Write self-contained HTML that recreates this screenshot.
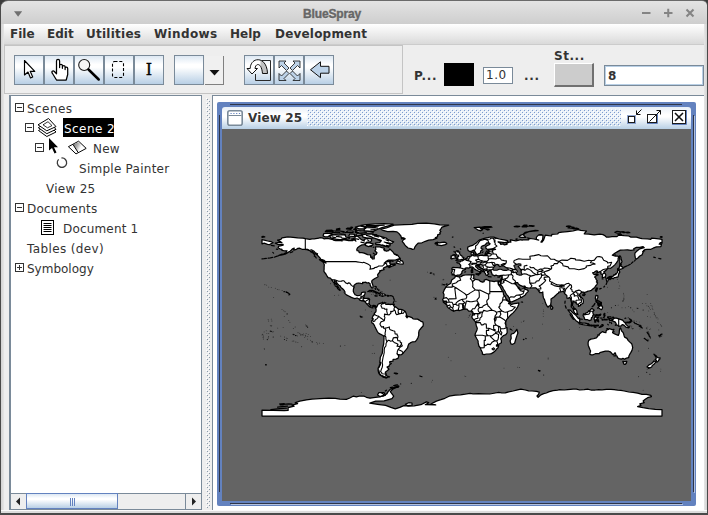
<!DOCTYPE html>
<html lang="en">
<head>
<meta charset="utf-8">
<title>BlueSpray</title>
<style>
html,body{margin:0;padding:0;}
body{width:708px;height:515px;overflow:hidden;background:#3c3c3c;position:relative;font-family:"DejaVu Sans","Liberation Sans",sans-serif;font-size:12px;color:#333;}
.abs{position:absolute;}
#win{position:absolute;left:0;top:0;width:708px;height:515px;background:#4a4a4a;border-radius:8px 6px 0 0;overflow:hidden;}
#edgeL{left:0;top:0;width:1px;height:515px;background:#4a4a4a;}
#edgeL2{left:1px;top:24px;width:3px;height:490px;background:linear-gradient(90deg,#d2d2d2,#e6e6e6);}
#edgeR{left:707px;top:0;width:1px;height:515px;background:#4a4a4a;}
#edgeR2{left:704px;top:24px;width:3px;height:490px;background:linear-gradient(90deg,#e6e6e6,#d2d2d2);}
#edgeB{left:0;top:513px;width:708px;height:2px;background:#4a4a4a;}
#edgeB2{left:1px;top:510px;width:706px;height:3px;background:#dcdcdc;border-top:1px solid #fafafa;box-sizing:border-box;}
#titlebar{left:1px;top:0;width:706px;height:24px;background:linear-gradient(#e3e3e3,#cecece);border-top:1px solid #6a6a6a;box-sizing:border-box;border-radius:7px 5px 0 0;}
#title{left:303px;top:7px;white-space:nowrap;font-family:"Liberation Sans","DejaVu Sans",sans-serif;font-weight:bold;font-size:12px;letter-spacing:-0.15px;color:#666666;-webkit-text-stroke:0.4px #666666;line-height:14px;text-shadow:0 1px 0 rgba(255,255,255,0.35);}
#menubar{left:4px;top:24px;width:700px;height:20px;background:linear-gradient(#ffffff,#dadada);border-bottom:1px solid #cccccc;}
.menu{position:absolute;top:26px;font-weight:bold;font-size:12px;line-height:16px;color:#333;white-space:nowrap;}
.tb{position:absolute;box-sizing:border-box;}
.btn{position:absolute;box-sizing:border-box;border:1px solid #7a8a99;background:linear-gradient(#dde8f3 0%,#ffffff 30%,#ffffff 40%,#b8cfe5 100%);}
.lbl{position:absolute;font-weight:bold;font-size:12px;line-height:16px;color:#333;white-space:nowrap;}
.tree{position:absolute;font-size:12px;line-height:16px;color:#333;white-space:nowrap;letter-spacing:0.45px;}
.pm{position:absolute;width:9px;height:9px;box-sizing:border-box;border:1px solid #333;background:#fff;}
.pm:before{content:"";position:absolute;left:1px;top:3px;width:5px;height:1px;background:#333;}
.pm.plus:after{content:"";position:absolute;left:3px;top:1px;width:1px;height:5px;background:#333;}
</style>
</head>
<body>
<div id="win">
  <div class="abs" style="left:1px;top:20px;width:706px;height:493px;background:#eeeeee"></div>
  <div class="abs" id="titlebar"></div>
  <div class="abs" id="title">BlueSpray</div>
  <!-- window buttons -->
  <svg class="abs" style="left:0;top:0" width="708" height="24" viewBox="0 0 708 24">
    <path d="M14 11.300 L22.200 11.300 L18.100 16.800 Z" fill="#6f6f6f"/>
    <rect x="642" y="12" width="8.500" height="2" fill="#848484"/>
    <path d="M664 13 h8.500 M668.250 8.750 v8.500" stroke="#848484" stroke-width="2" fill="none"/>
    <path d="M686.500 9.500 l7 7 M693.500 9.500 l-7 7" stroke="#848484" stroke-width="2.100" fill="none"/>
  </svg>
  <div class="abs" id="menubar"></div>
  <div class="menu" style="left:10px">File</div>
  <div class="menu" style="left:47px">Edit</div>
  <div class="menu" style="left:86px;letter-spacing:0.25px">Utilities</div>
  <div class="menu" style="left:154px;letter-spacing:0.35px">Windows</div>
  <div class="menu" style="left:230px">Help</div>
  <div class="menu" style="left:275px;letter-spacing:0.2px">Development</div>

  <!-- left toolbar -->
  <div class="tb" style="left:4px;top:45px;width:399px;height:49px;border:1px solid #c4c4c4;background:#eeeeee"></div>
  <div class="btn" style="left:14px;top:55px;width:30px;height:30px"></div>
  <div class="btn" style="left:44px;top:55px;width:30px;height:30px"></div>
  <div class="btn" style="left:74px;top:55px;width:30px;height:30px"></div>
  <div class="btn" style="left:104px;top:55px;width:30px;height:30px"></div>
  <div class="btn" style="left:134px;top:55px;width:30px;height:30px"></div>
  <div class="btn" style="left:174px;top:55px;width:30px;height:30px"></div>
  <div class="abs" style="left:205px;top:56px;width:18px;height:28px;background:#f0f0f0;border-right:1px solid #808080;border-bottom:1px solid #808080"></div>
  <div class="btn" style="left:244px;top:55px;width:30px;height:30px"></div>
  <div class="btn" style="left:274px;top:55px;width:30px;height:30px"></div>
  <div class="btn" style="left:304px;top:55px;width:30px;height:30px"></div>
  <svg class="abs" style="left:0;top:45px" width="402" height="50" viewBox="0 45 402 50">
    <!-- arrow cursor -->
    <path d="M24.500 60.500 L24.500 75 L28 72 L30.500 78 L32.700 77 L30.200 71.300 L34.800 71.300 Z" fill="#fff" stroke="#000" stroke-width="1.15" stroke-linejoin="round"/>
    <!-- hand -->
    <path d="M56.500 80 L52.500 73.500 C50.800 71.300 53 70 54.600 71.700 L56.500 73.800 L56.500 61 C56.500 58.800 59.600 58.800 59.600 61 L59.600 67.500 L59.600 65.500 C59.600 64 62.400 64 62.400 65.500 L62.400 68.300 L62.400 66.700 C62.400 65.200 65.100 65.200 65.100 66.700 L65.100 69.500 L65.100 68.200 C65.100 66.800 67.700 66.800 67.700 68.400 L67.700 74.500 L66.200 80 Z" fill="#fff" stroke="#000" stroke-width="1.25" stroke-linejoin="round"/>
    <!-- magnifier -->
    <circle cx="84.2" cy="65" r="5.5" fill="#f6f6f6" stroke="#1a1a1a" stroke-width="1.1"/>
    <path d="M88.500 69.500 L98.700 79.500" stroke="#000" stroke-width="2.500" stroke-linecap="round"/>
    <!-- dashed rect -->
    <rect x="112.500" y="61.500" width="11" height="16" rx="2" fill="none" stroke="#000" stroke-width="1.1" stroke-dasharray="3 1.800"/>
    <!-- dropdown arrow -->
    <path d="M209.500 70 L219.500 70 L214.500 75.500 Z" fill="#111"/>
    <!-- rotate icon -->
    <defs><linearGradient id="rg" x1="247" y1="0" x2="268" y2="0" gradientUnits="userSpaceOnUse"><stop offset="0.6" stop-color="#ffffff"/><stop offset="0.68" stop-color="#c2c2c2"/></linearGradient></defs>
    <path d="M255.500 74 V80.500 H270.500 V60.500 H262" fill="none" stroke="#2a2a2a" stroke-width="1"/>
    <path d="M247 68.500 L252 74 L257.500 68.500 L255 68.500 C255.500 63 261.500 62 262.500 73.500 L267.500 73.500 C267 55.500 250.500 56.500 250.200 68.500 Z" fill="url(#rg)" stroke="#111" stroke-width="1" stroke-linejoin="round"/>
    <!-- 4 arrows -->
    <g fill="#bcd2e8" stroke="#111" stroke-width="0.8" stroke-linejoin="round">
      <path d="M279 61 L286 61 L284 63 L289 68 L286.500 70.500 L281.500 65.500 L279 68 Z"/>
      <path d="M300 61 L293 61 L295 63 L290 68 L292.500 70.500 L297.500 65.500 L300 68 Z"/>
      <path d="M279 80.500 L286 80.500 L284 78.500 L289 73.500 L286.500 71 L281.500 76 L279 73.500 Z"/>
      <path d="M300 80.500 L293 80.500 L295 78.500 L290 73.500 L292.500 71 L297.500 76 L300 73.500 Z"/>
    </g>
    <!-- left arrow -->
    <path d="M310.500 69.750 L320.500 61.800 L320.500 66.300 L329 66.300 L329 73.200 L320.500 73.200 L320.500 77.700 Z" fill="#bcd2e8" stroke="#111" stroke-width="1" stroke-linejoin="round"/>
  </svg>
  <div class="abs" style="left:143px;top:60px;width:12px;text-align:center;font-family:'DejaVu Serif','Liberation Serif',serif;font-weight:normal;font-size:16px;line-height:20px;color:#000;-webkit-text-stroke:0.35px #000">I</div>

  <!-- right toolbar -->
  <div class="lbl" style="left:414px;top:68px;letter-spacing:0.8px">P...</div>
  <div class="abs" style="left:444px;top:63px;width:30px;height:23px;background:#000"></div>
  <div class="abs" style="left:483px;top:67px;width:30px;height:17px;box-sizing:border-box;border:1px solid #7a8a99;background:#fff;font-size:12px;line-height:15px;color:#333;padding-left:2px;letter-spacing:0.5px">1.0</div>
  <div class="lbl" style="left:524px;top:68px;letter-spacing:0.7px">...</div>
  <div class="lbl" style="left:554px;top:48px;letter-spacing:0.55px">St...</div>
  <div class="abs" style="left:554px;top:63px;width:40px;height:24px;box-sizing:border-box;background:#cccccc;border-top:1px solid #ffffff;border-left:1px solid #ffffff;border-right:2px solid #707070;border-bottom:2px solid #707070"></div>
  <div class="abs" style="left:604px;top:65px;width:100px;height:21px;box-sizing:border-box;border:1px solid #7a8a99;box-shadow:inset 0 0 0 1px #b8cfe5;background:#fff;font-size:12px;font-weight:bold;line-height:20px;color:#333;padding-left:3px">8</div>

  <!-- tree panel -->
  <div class="abs" style="left:9px;top:95px;width:193px;height:415px;box-sizing:border-box;border:1px solid #7a8a99;border-left-width:2px;background:#fff"></div>
  <div class="pm" style="left:15px;top:103px"></div>
  <div class="tree" style="left:27px;top:101px">Scenes</div>
  <div class="pm" style="left:25px;top:123px"></div>
  <div class="abs" style="left:63px;top:118px;width:51px;height:19px;background:#000"></div>
  <div class="tree" style="left:64px;top:121px;color:#fff">Scene 2</div>
  <div class="pm" style="left:35px;top:143px"></div>
  <div class="tree" style="left:93px;top:141px;letter-spacing:0.2px">New</div>
  <div class="tree" style="left:79px;top:161px;letter-spacing:0.26px">Simple Painter</div>
  <div class="tree" style="left:46px;top:181px;letter-spacing:0.28px">View 25</div>
  <div class="pm" style="left:15px;top:203px"></div>
  <div class="tree" style="left:27px;top:201px;letter-spacing:0.23px">Documents</div>
  <div class="tree" style="left:63px;top:221px;letter-spacing:0.18px">Document 1</div>
  <div class="tree" style="left:27px;top:241px;letter-spacing:0.38px">Tables (dev)</div>
  <div class="pm plus" style="left:15px;top:263px"></div>
  <div class="tree" style="left:27px;top:261px;letter-spacing:0.0px">Symbology</div>
  <svg class="abs" style="left:10px;top:96px" width="191" height="180" viewBox="10 96 191 180">
    <!-- layers icon -->
    <g fill="#fff" stroke="#000" stroke-width="1" stroke-linejoin="round">
      <path d="M38.500 130.500 L46.800 136.500 L56 132 L48.500 124.500 Z"/>
      <path d="M38.300 127.700 L46.800 133.700 L56 129.300 L48.500 121.500 Z"/>
      <path d="M38 124.800 L46.800 130.800 L56 126.600 L48.500 118.500 Z"/>
      <path d="M43 124.800 L47.500 127.800 L52 125.600 L48 121.700 Z" fill="#fff" stroke-width="0.8"/>
    </g>
    <!-- mouse pointer -->
    <path d="M49 138 L49 150.500 L52 148 L54.500 153.500 L56.500 152.500 L54 147.200 L58 147.200 Z" fill="#000"/>
    <!-- New icon -->
    <defs><linearGradient id="ng" x1="74" y1="146" x2="80" y2="149" gradientUnits="userSpaceOnUse"><stop offset="0" stop-color="#8a8a8a"/><stop offset="0.5" stop-color="#b8b8b8"/><stop offset="1" stop-color="#ffffff"/></linearGradient></defs>
    <path d="M68.400 146.700 L78.600 141.200 L86.200 148.400 L76 153.900 Z" fill="#fff" stroke="#000" stroke-width="1" stroke-linejoin="round"/>
    <path d="M73 144.300 L79 142.200 L83.500 148.800 L78 152 Z" fill="url(#ng)"/>
    <path d="M72.800 144.200 L78 152.300" stroke="#000" stroke-width="1"/>
    <!-- circle -->
    <path d="M61.500 158 A4.700 4.700 0 1 1 58.600 159.400" fill="none" stroke="#3a3a3a" stroke-width="1.300"/>
    <!-- document -->
    <rect x="41.500" y="220.500" width="12" height="14" fill="#fff" stroke="#000" stroke-width="1"/>
    <path d="M43.500 223.500 h8 M43.500 225.500 h8 M43.500 227.500 h8 M43.500 229.500 h8 M43.500 231.500 h8" stroke="#000" stroke-width="1"/>
  </svg>
  <!-- scrollbar -->
  <div class="abs" style="left:11px;top:493px;width:190px;height:16px;box-sizing:border-box;border-top:1px solid #7a8a99;background:#eeeeee"></div>
  <div class="abs" style="left:26px;top:493px;width:92px;height:16px;box-sizing:border-box;border:1px solid #6382bf;background:linear-gradient(#dde8f3 0%,#ffffff 30%,#ffffff 40%,#b8cfe5 100%)"></div>
  <div class="abs" style="left:185px;top:494px;width:1px;height:15px;background:#7a8a99"></div>
  <svg class="abs" style="left:11px;top:493px" width="190" height="16" viewBox="11 492 190 16">
    <path d="M16 500.500 L20 496.500 L20 504.500 Z" fill="#222"/>
    <path d="M196 500.500 L192 496.500 L192 504.500 Z" fill="#222"/>
    <path d="M70.500 497 v8 M72.500 497 v8 M74.500 497 v8" stroke="#6382bf" stroke-width="1"/>
  </svg>

  <!-- divider -->
  <svg class="abs" style="left:202px;top:95px" width="11" height="416" viewBox="0 0 11 416">
    <defs><pattern id="dv" x="4" y="3" width="4" height="4" patternUnits="userSpaceOnUse">
      <rect x="0" y="0" width="1" height="1" fill="#ffffff"/><rect x="1" y="1" width="1" height="1" fill="#8c9bab"/>
      <rect x="2" y="2" width="1" height="1" fill="#ffffff"/><rect x="3" y="3" width="1" height="1" fill="#8c9bab"/>
    </pattern></defs>
    <rect x="4" y="3" width="4" height="410" fill="url(#dv)"/>
  </svg>

  <!-- desktop pane -->
  <div class="abs" style="left:212px;top:95px;width:493px;height:416px;box-sizing:border-box;border-top:1px solid #7a8a99;border-left:1px solid #7a8a99;background:#fff"></div>
  <!-- internal frame -->
  <div class="abs" style="left:217px;top:102px;width:479px;height:404px;background:#6382bf;border-radius:2px"></div>
  <div class="abs" style="left:222px;top:107px;width:469px;height:22px;background:linear-gradient(#e8eff7 0%,#ffffff 35%,#ffffff 45%,#b8cfe5 100%);border-radius:3px 3px 0 0"></div>
  <svg class="abs" style="left:217px;top:102px" width="479" height="404" viewBox="217 102 479 404">
    <defs><pattern id="bump" x="307" y="109" width="4" height="4" patternUnits="userSpaceOnUse">
      <rect x="0" y="0" width="1" height="1" fill="#ffffff"/><rect x="1" y="1" width="1" height="1" fill="#7d9bcf"/>
      <rect x="2" y="2" width="1" height="1" fill="#ffffff"/><rect x="3" y="3" width="1" height="1" fill="#7d9bcf"/>
    </pattern></defs>
    <rect x="307" y="109" width="314" height="17" fill="#dfe9f4" opacity="0.55"/><rect x="307" y="109" width="314" height="17" fill="url(#bump)"/>
    <!-- inner dark lines of border -->
    <path d="M230 104.500 H682" stroke="#2e3548" stroke-width="1"/>
    <path d="M219.500 115 V492" stroke="#2e3548" stroke-width="1"/>
    <path d="M693.500 115 V492" stroke="#2e3548" stroke-width="1"/>
    <path d="M230 503.500 H682" stroke="#2e3548" stroke-width="1"/>
    <path d="M694.500 116 V493" stroke="#ffffff" stroke-width="1" opacity="0.5"/>
    <path d="M231 504.500 H683" stroke="#ffffff" stroke-width="1" opacity="0.5"/>
    <!-- frame icon -->
    <rect x="227.800" y="110.800" width="14.400" height="14.400" rx="2" fill="#fff" stroke="#7a8a99" stroke-width="1.600"/>
    <path d="M228.500 115.500 H241.500" stroke="#7a8a99" stroke-width="1"/>
    <path d="M230.500 113.500 h1.200 M233.300 113.500 h1.200 M236.100 113.500 h1.200 M238.900 113.500 h1.200" stroke="#6382bf" stroke-width="1.200"/>
    <!-- iconify -->
    <rect x="628.500" y="116.500" width="6" height="6" fill="#fff" stroke="#1a1a1a" stroke-width="1"/>
    <rect x="627.500" y="115.500" width="8" height="8" fill="none" stroke="#6382bf" stroke-width="1" opacity="0.7"/>
    <path d="M641.500 109.500 L636.500 114.500 M636.500 110.500 V114.500 H640.500" stroke="#111" stroke-width="1" fill="none"/>
    <!-- maximize -->
    <rect x="647.500" y="114.500" width="9" height="8" fill="#fff" stroke="#1a1a1a" stroke-width="1"/>
    <path d="M647 123.500 H657.500 V114" stroke="#6382bf" stroke-width="1" fill="none"/>
    <path d="M649.500 121.500 L660.500 110.500 M656.500 110.500 H660.500 V114.500" stroke="#111" stroke-width="1" fill="none"/>
    <!-- close -->
    <rect x="672.500" y="110.500" width="13" height="13" fill="#fff" stroke="#1a1a1a" stroke-width="1"/>
    <path d="M672 124.500 H686.500 V110" stroke="#6382bf" stroke-width="1" fill="none"/>
    <path d="M675 113 L683 121 M683 113 L675 121" stroke="#111" stroke-width="1.6" fill="none"/>
  </svg>
  <div class="abs" style="left:248px;top:110px;font-weight:bold;font-size:12px;line-height:16px;color:#333;white-space:nowrap;letter-spacing:0.15px">View 25</div>
  <!-- map content -->
  <div class="abs" style="left:222px;top:129px;width:469px;height:372px;background:#646464;overflow:hidden">
<svg class="abs" style="left:0;top:-1px" width="469" height="373" viewBox="0 0 469 373">
<g fill="#ffffff" stroke="none">
<path d="M53.3 115.1 57.8 114.1 60 114.7 58.3 113.6 55.6 112.1 58.9 111.3 60 109.9 66.1 108.8 71.1 109.3 75.6 109.9 81.1 110.2 83.3 110.7 87.8 111.3 90 110.8 92.2 110.8 96.7 110.2 97.8 109.7 101.1 110.2 102.2 110.9 105.6 110.4 110 111.3 112.2 112.4 113.9 112.7 117.8 112.4 120 113 120 111.8 122.8 111.9 126.7 112.7 130.6 112.7 131.1 111.9 133.3 112.2 133.9 113.2 132.8 111.3 133.3 110.2 132.8 108.6 135 108 136.7 109.1 137.8 110.2 138.3 110.8 140 111.9 142.2 113 142.2 111.3 145.6 110.4 148.9 110.6 149.7 111.9 148.9 113.6 147.8 114.4 145 114.1 143.3 115.4 142.2 116.7 140 116.9 137.8 118 135.6 119.7 134.8 121.3 135 122.7 136.7 122.8 137.2 124.7 140 124.7 142.2 125.2 145.6 126.6 148.6 126.8 148.7 129.1 150 130.2 150.6 131 152.2 130.8 152.2 129.1 152.2 127.4 154.4 126.1 155 124.7 152.8 122.8 153.9 121.3 153.3 118.8 157.8 118.8 160 119.7 162.2 120.2 162.8 122.4 164.4 123.2 166.7 122.7 167.8 121 171.1 124.1 172.2 125.8 175.6 127.1 176.7 128.6 178 130.2 176.7 130.9 173.3 132.2 168.9 132.1 166.1 132.2 163.9 133.6 162.2 135.2 164.4 133.9 167.8 133.3 168.6 133.8 167.8 134.7 168 135.8 168.9 136.7 172.2 135.8 173.3 136.9 169.4 138.4 167 139.7 166.4 138.8 168.3 137.6 165.6 138 165.6 138.3 163.3 139.1 161.7 139.9 161.3 140.8 162.2 141.6 160.6 142 157.8 142.8 157.8 144.1 156.7 145.2 155.6 146.9 156.1 148.8 154.4 149.7 153.3 150.3 151.7 151.3 150 152.4 149.7 154.1 150.6 156.3 151.1 158.2 150.8 159.9 149.8 160 149.1 158.9 148.1 157.1 148.1 155.8 146.7 154.7 145 155 143.9 154.2 142.2 154.3 140.6 154.4 140.8 155.6 138.9 155.4 136.7 155 134.8 155.3 133.3 156.3 131.9 157.4 132 159.1 131.4 161.3 131.3 163.2 132 165 133 166.6 134.4 167.3 135.6 167.7 137.8 167.3 139.1 166.6 139.6 164.7 141.7 164.1 143.3 164.1 142.8 166.3 142.2 167.4 141.9 169.1 141.3 170.2 142.2 170.4 144.4 170.3 146.7 170.4 147.6 171.3 147.2 173.6 147 175.8 147.8 176.9 148.9 178 150 178.2 151.3 177.4 153.3 177.7 154.1 178.6 153.4 180 152.9 178.8 151.7 178.1 150.8 178.9 150.9 179.9 149.4 179.6 147.8 178.8 147 178.2 145.6 176.9 144.7 175.9 143.3 174.1 142.6 173.3 140.6 173 138.3 172.4 136.7 170.8 135 170 132.8 170.6 130.6 169.9 128.9 169.1 126.7 168 124.4 166.9 122.8 165.4 123 164.1 122.2 162.4 120.6 160.8 118.9 159.4 118.3 158 116.7 156.9 115 155.2 114.2 153.3 112.4 152.7 112.6 154.1 113.9 155.8 115 157.4 116.7 159.7 117.4 161 118.3 162.2 117.6 162.4 115.6 160.6 115.2 159.1 113.3 158 113 156.9 112.2 155.2 111.1 153.8 109.9 151.9 108.4 150.2 106.1 149.7 104.6 147.3 103.9 146 102.4 144.1 101.9 143.1 102.1 141.3 102.1 139.1 102.3 136.7 101.4 134.2 103.3 134.1 103.9 135.2 103.6 133.6 102.2 132.4 98.9 131.3 97.8 129.7 95.6 127.4 94.4 126.3 92.2 124.7 90 123 87.8 122.8 85 121.6 82.2 121.3 80 121.3 77.8 120.2 75.6 120.4 74.4 121.3 71.7 122.1 72.2 120.2 70.6 120.8 69.4 122 68.3 123 66.1 124.4 63.9 125.8 61.1 126.7 58.9 127.1 56.9 127.3 60 126.1 61.7 125.8 63.9 124.7 65 122.8 63.3 122.8 61.7 122.7 60 122.4 60 121.3 57.8 120.8 56.1 119.7 56.7 118.2 58.3 117.8 61.1 117.2 61.1 116.3 58.9 116.3 55.6 116.3ZM158.9 101.1 164.4 100 167.8 98.6 172.2 97.1 182.2 96.6 190 96.3 195.6 95.4 204.4 95.1 212.2 95.8 217.8 96.9 226.7 97.2 220 99.1 218.9 100.8 217.8 102.4 218.9 103.6 217.8 104.7 218.3 105.8 215.6 106.9 215.6 108.6 213.3 109.7 215 110.1 211.1 111.6 206.7 112.2 203.3 113.3 200 114.8 196.1 115.2 194.4 116.9 192.8 119.1 192.2 121 190.6 121.4 188.9 120.6 186.1 120 184.4 118.6 182.8 116.9 181.7 115.2 180.3 113.6 181.1 111.9 183.3 110.8 179.4 109.7 178.9 108 177.2 105.8 175 103.9 171.1 103.3 165.6 103.6 161.1 102.4ZM166.7 119.1 161.1 118 157.8 116.6 153.9 116.6 153.3 115.2 157.8 114.7 158.9 112.4 154.4 110.8 152.2 110.2 145.6 110.2 141.1 109.1 140 106.9 145.6 106 150 106.1 154.4 107.1 157.8 108.2 161.1 109.1 164.4 110.2 165.6 111.3 168.9 112.8 171.7 113.8 170 115.4 167.8 115 164.4 114.7 168.3 116.3 167.8 118 164.4 117.4ZM109.4 110.2 113.3 111.1 117.8 111.7 123.3 111.3 127.2 110.6 127.8 109.7 123.9 109.1 123.3 107.1 120 106.6 116.7 107.2 113.3 106.7 108.9 107.2 107.8 108.6ZM101.1 108 103.3 108.9 106.1 108.6 107.8 107.4 111.1 106.6 109.4 105.6 105.6 105.2 101.7 105.6ZM142.2 103 151.1 103.3 153.3 102.4 156.7 100.8 160 99.7 164.4 98.3 171.1 96.7 171.1 96 162.2 95.7 153.3 95.8 144.4 96.7 138.9 97.4 142.2 98.8 144.4 99.7 142.2 101.3ZM133.3 99.1 136.7 100.8 142.2 100.8 143.3 99.1 137.8 97.8ZM137.8 105 145.6 105.2 151.1 104.9 151.1 103.9 145.6 103.2 140 102.8 133.3 102.7 133.3 103.9ZM133.9 108 140 107.1 140 105.8 134.4 105.8ZM126.7 108 132.2 108.6 132.8 106.3 127.8 106ZM110 104.4 117.8 105.2 122.2 104.7 122.2 103.6 117.8 103.2 111.1 103ZM124.4 104.4 131.1 104.7 131.1 103 125.6 103ZM103.3 103.6 111.1 103.2 110 102.1 104.4 102.4ZM143.3 117.4 146.7 118.6 150.6 117.2 151.1 115.8 146.7 114.7 143.9 115.2ZM174.1 135.1 177.8 136 181.1 136.1 181.4 135 180.6 133.2 178.3 132.4 178.3 130.7 176.3 131.7 175 133.6ZM97.4 131.7 100.6 132.2 102.8 134.1 101.3 134.1 99.4 133ZM40 115.8 42.2 115.2 45.6 116.3 47.8 116.6 48.9 115.8 51.1 114.7 48.9 113.6 45.6 113 42.2 112.1 40 111.6ZM154.1 178.6 154.7 179.1 156.1 176.3 156.9 175.8 158.9 175.2 160.6 174.2 160.6 175.8 162.2 175.2 162.2 174.4 163.9 176.3 166.7 176.2 168.3 176.7 171.1 176.1 171.3 176.9 172.4 178.6 173.9 179.1 175.6 180.4 176.7 181.3 178.9 181.3 180.6 181.8 182.2 182.7 183.3 183.6 184.4 186 184.4 187.7 186.1 188.6 187.2 188.7 190 189.7 191.1 190.8 193.3 191.1 195.6 191.1 197.2 192.1 198.9 193.3 200.8 193.8 201.3 196 201.1 198 199.4 199.7 198.3 201.3 197.2 202.4 196.7 204.7 196.7 207.4 195.9 209.7 194.7 211.9 193.3 213.6 190.6 213.8 188.3 214.9 186.7 216.1 186 218 185.6 219.9 183.9 221.9 182.2 223.8 180.7 225.6 179.4 226.7 177.8 226.8 175.8 226.3 175.1 225.8 176.4 227.4 176.7 228.6 175.9 230.4 173.9 231.1 171.1 231.3 170.9 233.2 167.8 233.6 167.8 235.2 169.3 235.4 167.4 236.9 167.2 238.1 165 239.1 166.1 240.2 166.9 241.2 164.9 243 163.3 244.3 164 246.1 164.1 246.7 165 248 167.6 248.8 166.1 249.2 163.9 249.7 162.2 249.4 160 248.3 157.8 246.7 156.7 245.2 156.1 242.4 156.1 240.2 157.2 238.6 158.3 236.9 158.9 234.7 157.8 233.6 158.1 231.9 158.3 229.3 159.2 227.4 160.3 225.2 160.6 222.4 160.7 220.2 161.2 218 161.7 215.8 161.8 213.6 162 210.8 161.9 208.3 160.6 207.2 158.3 206.1 156.4 205 155.2 203.3 154.2 201.3 153.1 199.1 152.2 197.1 151.2 195.6 149.8 194.7 149.7 192.8 150.8 191.8 151.3 190.8 150.1 190.4 150.6 188.9 151.1 187.7 152.2 186.7 152.4 185.2 153.9 183.8 154.1 181.9 153.9 180.2 153.4 180ZM233.4 148.2 234.1 148.1 236.7 148.8 238.9 148.6 241.1 147.4 243.3 147 246.7 146.9 249.6 146.9 251.1 146.6 252.2 146.9 251.7 148 251.9 149.7 251.1 150.2 252.2 151 253.9 151.4 256.9 152 258.3 153.3 260.6 154.2 262.2 153.6 262.2 152.1 264.4 151.4 266.1 152.2 267.8 152.9 270 153.2 272.2 153.7 273.9 153 275.6 153.2 278 153.2 276.2 154.7 276.3 156.3 277.6 158 278.9 160.2 279.6 161.9 281 163.6 281.4 165.2 281.6 167.1 282.9 168 283.7 170.2 284.4 171.3 286.1 172.8 287.8 173.9 288.1 175 287.8 175.2 289.4 176.4 292.2 175.7 294.4 175.3 296.9 174.8 296.7 176.4 295.6 179.1 293.3 182.4 291.1 184.9 288.9 186.8 286.7 189.1 285.6 190.4 284.4 191.9 283.7 193.6 283.1 195.2 283.9 196.9 283.9 199.1 285 199.9 285.1 202.4 285.2 204.7 283.9 206.6 281.1 207.8 279.4 209.7 278.7 210.8 279.3 212.4 279.4 214.7 276.7 216.3 276.6 217.8 276.1 219.7 274.4 221.3 273.3 222.8 271.4 224.4 269.4 225.6 267.8 225.8 264.4 226 262.2 226.7 260.4 226.1 260.3 224.3 259.2 222.4 258.3 219.8 256.9 218 256.1 214.7 256.1 213 254.8 210.8 253.3 208 253.1 206.3 253.7 204.7 255 201.9 255.3 200.2 254.4 198 253.7 194.8 253.3 193.6 252.2 192.4 250.3 190.2 249.8 188.8 250.6 187.4 250.8 185.8 250.9 184.1 249.8 183 247.8 183.1 246.7 183.2 245.6 181.9 244.8 181 242.8 181 241.1 181.3 238.9 182.2 237.2 182.6 235.6 182.2 233.3 182.7 231.7 183.1 230 182.4 227.8 180.7 226.1 179.7 225.2 178.6 225 177.1 223.3 175.8 221.4 174.2 221.3 173 220.6 171.7 221.7 170.2 221.9 168 222 166.3 221.1 164.7 222.2 161.9 223.9 159.1 225.6 157.1 227.2 156.3 228.9 155.2 229.2 153.6 229.7 151.9 231.7 150.6 232.8 149.7ZM233.9 148 235 147.2 237.8 147.1 239.4 145.8 240 144.9 239.7 144.1 240.9 142.4 243.6 141.3 243.3 140 245 139.8 246.7 140.1 248.3 139.3 250 138.8 251.4 139.7 252.2 140.9 253.9 141.9 255.6 142.7 257.4 143.6 257.8 144.9 257.4 145.8 258.3 145.6 259.1 144.7 258.3 143.9 258.9 143 260.6 143.6 260.3 142.9 257.8 141.6 256.7 141.3 255.6 140.7 255 139.6 253.7 138.8 253.7 137.7 255.2 137.2 255.6 138 256.7 138.6 257.2 139.3 258.9 140.2 260.6 140.9 261.7 141.7 261.6 143.2 262.2 144.1 263.3 145.3 263.9 146.9 264.8 147.4 265.6 147.4 265.8 146.3 266.7 146.1 266.1 145.2 265.3 144.1 265.3 143 266.4 143.6 267.2 142.7 268.9 142.7 269.2 143.3 269.1 144.1 269.8 145.2 270.3 146.9 271.3 147.2 272.8 147.8 274 147.1 275.6 147.8 277.8 147.7 279.8 147.3 280 148.6 279.8 149.7 279 151.3 278.3 153 278 153.2 276.1 153.4 276.2 154.7 277.2 156.7 278 157.1 278.8 155.2 278.9 156.9 280.6 159.1 281.4 161 282.8 163 283.6 164.7 284.4 166.3 286.1 168.2 287.2 170 287.8 172.4 288.3 173.9 290 173.8 293.3 172.4 295.6 171.3 298 170 300 169.1 301.4 168.3 303.3 167 304.2 165.4 305.6 164.1 306.4 163 305.1 161.8 303.3 161.3 302.7 160.3 302.7 158.8 302.2 159.4 300.6 161 297.8 161.3 297.3 160.2 297 159.1 296.4 160.2 295.7 158.9 294.4 157.4 293.3 155.2 293.9 154.7 295.6 154.7 296.4 156 298.3 157.4 300.6 158.4 302.8 158 303.7 159.4 305.6 159.8 308.3 160 311.1 159.9 313.9 159.8 314.8 160.8 316.1 161.9 317.8 163 316.7 163.2 317.8 164.7 320 164.7 320.8 163.9 320.9 166.9 321.4 169.7 322.6 171.9 323.3 174.3 324.4 176.9 325.6 178.8 326.2 179 326.9 178.1 328 177.7 328.7 176.6 329.1 173.6 329 171 330.6 169.9 331.7 169.3 333.3 167.7 335 166.1 336.7 165 336.7 164.1 338.3 163.8 340 163.6 341.7 163 342.2 164.7 342.8 165.8 344.8 167.4 345 170.2 346.1 170.4 347.8 169.4 348.6 170.8 349.1 173 349.7 175.2 349.4 176.9 349.2 178.9 350.6 180.2 351.4 181.3 351.7 183 352.6 184.9 354.9 186.4 355.8 186.4 355 184.9 354.9 183 353.7 181.1 352.2 180.3 351.3 178.6 350.3 177.7 350.9 175.2 351.1 173.1 352.2 173.2 352.2 174 353.9 174.7 354.4 175.8 356.1 176.3 356.7 178 356.4 178.4 358.6 177.4 358.6 176.3 359.4 176.3 361.1 175.2 361.4 173.6 361.1 171.3 360 169.9 358.9 169.1 357.8 167.4 357.4 166.7 358.6 165.2 360 164.1 361.7 164.1 362.2 165.3 362.8 164.3 364.4 163.9 366.1 163.2 367.2 163 369.4 162.3 371.1 160.8 372.8 159.4 373.6 158 375 156.3 375.6 154.7 374.4 153.9 375.4 153 374.2 151.6 373.7 150 372.6 149.1 373.9 147.8 376.1 146.9 375.9 146.3 374.2 146.1 372.2 146.6 371.1 145.6 370.8 144.7 372.2 144.3 374.4 142.8 375.6 143 374.8 144.7 375.6 144.6 378.1 143.7 379.2 144.9 378.7 145.8 380.6 146.6 380.4 148 380.3 149.7 381.7 149.4 383.3 148.9 383.8 147.4 383.7 146.3 382.6 145 381.7 143.9 384.1 142.4 385 141 386.7 140 388.3 140.4 390.6 138.8 392.8 136.9 394.4 134.9 396.1 132.4 396.1 130.2 397 128.9 395.6 128 392.8 128 390.3 127.2 392.8 125.2 395.6 123.6 398.3 122.1 401.7 122 405.6 121.8 408.9 122.4 412.2 121.9 411.7 120.8 414.4 119.4 417.8 119.3 421.1 118.6 422.2 119.7 417.8 120.8 414.4 123.6 413 125 412.8 126.9 413.3 129.7 414.1 131.3 415.9 130 417.8 128 420 126.9 420.6 125.4 421.4 123.8 420.6 123.6 422.8 121.6 425 121.3 428.9 121.3 431.1 120.2 434.4 118.9 438.9 118.6 439.4 116.3 437.2 116.1 438.3 114.7 440 115.2 440 111.4 436.7 110.8 432.2 110.4 429.4 110.2 428.9 111.3 425.6 110.8 420 110.7 417.8 110.2 414.4 109.1 408.9 109.1 406.7 108 402.2 107.7 396.7 107.1 395 108.6 390 108.6 386.7 109.1 384.4 109.1 383.3 108 381.1 106.6 377.8 106.1 372.2 106.9 366.7 106.1 362.2 105.8 364.4 103 358.9 102.4 355.9 101.7 351.1 103 345.6 103.6 340 104.1 336.7 104.7 335.6 106 330 106.3 329.4 108 326.7 107.7 323.3 107.1 322.8 108.6 321.7 111.9 320 114.1 318.9 114.1 320.6 111.6 320.9 108.8 320.9 107.1 316.7 106.9 314.4 109.1 314.4 111.3 316.7 112.1 313.9 111.3 311.7 111 307.2 110.4 306.7 111.9 301.1 111.9 300 112.2 298.9 111.6 293.9 112.8 291.1 112.4 288.9 111.9 288.3 111.8 288.9 114.1 286.7 114.2 284.4 115.8 285 116.3 282.2 116.9 281.1 115.8 278.7 116.4 278.3 115.2 276.1 113.9 278.9 114.1 282.8 114.7 285.6 113.8 285.6 112.7 282.2 111.9 277.2 111 274.4 110.2 271.7 109.1 268.6 109 265.6 109.7 262.2 110.4 259.4 111.3 257.2 112.2 255.6 113.6 253.9 115.2 252.2 116.3 250.6 117.4 247.8 118.2 245.8 119.1 245.6 120.8 246.1 122.4 247.8 123.6 249.4 123.2 251.7 122.1 252.4 122.7 253.1 123.9 254.1 125.6 254.4 126.4 255.9 126.3 256.7 125.7 258.3 125.2 258.6 123.8 258.9 122.8 260.6 121.9 260.9 121.1 259.2 120.6 259.1 119.1 260 118.2 262.8 117.1 263.9 116 264.8 114.9 266.9 114.9 268.1 115.8 267.2 116.7 265 117.8 263.7 118.6 263.9 120.2 265 121 265.6 121.4 267.8 121.1 270 120.8 271.7 120.7 273.6 121.4 271.1 121.8 268.9 121.9 266.7 122 266.1 123 267.2 123.2 267 124.3 265.6 124.7 265 123.9 263.9 124.2 263.3 125.8 263.3 126.9 262.2 127.3 261.1 127.6 260.6 127.1 258.3 127.4 255.9 128 253.9 127.6 252.2 128 251.1 127.4 250.9 126.3 251.7 125.2 251.7 124 249.1 124.7 249.1 126.3 249.7 128 247.8 128.4 245.6 128.9 245 129.9 243.9 130.9 242.8 131.3 241.8 131.9 240.2 132.9 238.6 133.1 238.2 133.9 236.7 133.8 234.8 134.2 235.2 134.9 237.2 135.4 237.8 136.3 238.7 137.1 238.6 138.6 238 139.8 235.6 139.7 233.3 139.6 231.1 139.4 229.8 140.2 230.2 141.9 230.2 143.6 229.4 144.9 230.2 145.6 230.1 146.9 231.7 146.7 232.8 147.1 233.3 147.8ZM233.9 132.4 236.1 132.1 238.9 131.7 241.4 131.1 241.8 129.4 240.3 129.1 239.8 127.8 238.3 126.9 237.8 125.8 237.2 124.7 237.8 124 235.6 123.9 236.4 122.9 234.4 122.9 233.6 124.1 233.9 125.8 234.7 126.9 236.4 127 236.7 128.2 236.4 128.8 235 128.9 235.3 129.9 234.2 130.4 236.1 130.9 235.2 131.3ZM233.3 130 233.1 128.6 233.8 127.4 232.8 126.7 230.9 126.8 230.6 127.7 228.9 128 229.4 129.1 228.7 130.2 229.4 130.8 231.1 130.4ZM213 115.2 215 114.2 217.2 114.9 220 114.4 222.2 114.1 223.9 114.7 224.9 115.8 223.3 116.6 219.4 117.6 216.7 117.1 214.8 117.1 215.6 116.3 213.3 115.9 215.6 115.4ZM252.2 99.6 255.6 101.8 258.9 102.8 260.6 101.8 258.3 100.7 263.3 100.7 261.1 99.6 257.8 99.1 255 99.3ZM297.2 108.6 298.9 109.3 303.9 109.4 301.7 107.4 302.2 105.8 306.7 103.6 316.1 102.7 313.3 102.4 308.9 103.2 303.3 104.3 301.1 106.3 298.3 107.4ZM346.1 100 351.1 100.3 352.2 99.3 348.3 98.8ZM292.2 98.6 295.6 98.9 297.8 98.3 294.4 98.1ZM392.8 104.3 394.4 105 398.3 104.8 398.9 103.8 395 103.4ZM260 99.1 264.4 99.8 270 99.2 268.9 98.7 262.2 98.6ZM263.9 101.1 265.6 102 267.2 101.6 266.1 101ZM300 98.8 304.4 99 305.6 98.3 301.1 98.2ZM306.7 98.2 311.1 98.4 312.2 97.9 307.8 97.7ZM301.1 97.7 304.4 97.8 305 97.2 302.2 97.1ZM351.1 100.7 353.9 101.2 356.7 100.9 354.4 100.1ZM344.4 98.3 346.7 98.8 348.9 98.3 346.7 97.8ZM399.4 103.9 401.7 104.7 403.3 104.3 401.1 103.7ZM403.9 104.3 405.6 104.9 407.8 104.7 406.1 104.2ZM395.6 106 397.2 106.6 399.4 106.6 398.3 105.9ZM438.3 109.1 440 109.3 440 108.6 438.9 108.6ZM40 109.3 42.8 108.9 41.1 108.4 40 108.6ZM397.8 127.7 398.9 129.1 399.2 131.3 400 133.6 398.9 135.8 399.4 136.9 397.8 136.9 397.8 134.7 397.8 131.3 397.4 128.8ZM395.6 141.9 397.2 140.8 398.9 141.3 401.7 139.9 400.6 139.1 397.8 137.4 397.2 139.7 395.6 140.8ZM397 142.1 397.8 144.1 396.7 145.8 396.4 147.4 396.1 148.9 395 149.1 393.9 149.4 392.2 149.6 391.1 150.8 390 150.2 390 149.6 387.8 149.9 385.6 150.2 385.6 149.7 387.2 148.7 389.4 148.4 391.1 148.3 392 146.6 392.8 147.1 394.2 146 395.6 144.1 395.6 142.7ZM385.6 150.3 386.4 151.3 385.9 153.2 384.7 153.3 384.4 151.9 384.1 151ZM387.2 150.2 389.4 150 389.2 150.7 387.8 151.6 387 151ZM374.4 160 375.6 160.2 374.8 162.4 374.2 163.6 373.4 162.4ZM360.8 166.6 362.2 165.7 363.3 166.2 362.2 167.6 360.8 167.4ZM373.9 167.4 375.8 167.6 375.9 169.7 375 170.8 375.3 172.2 377.8 173.6 377.2 173.9 376.1 172.7 374.4 172.8 373.7 171.7 373.3 170.2ZM375.6 180.2 377.2 178.4 379.4 177.2 380.6 179.1 380.2 180.8 379.4 181.7 377.8 180.8 376.7 179.7ZM378.1 174.1 379.4 174.3 379.4 176.3 378.3 176.7 378.7 175.4ZM375.6 174.9 376.9 175.4 377 177.4 376.1 177.4 375.9 176ZM370.2 178.6 371.7 177.4 372.9 175.4 372.4 176.6 371.1 178.2ZM373.8 173.1 374.9 173.2 374.8 174.3 374.2 174.1ZM361.1 187.7 361.4 186 362.8 186.1 363.9 185 365.6 184.4 366.7 183 368.3 181.9 369.7 180.3 370.8 181 372.2 182.2 371.1 183.2 370.8 184.1 371.1 185.6 372.2 186.9 370.9 187.1 370.6 188.9 369.4 189.7 369.2 191.9 367.4 192.6 365.6 191.7 363.9 191.7 362.4 191.1 362.2 189.4ZM345.9 181.8 348.3 182.2 349.7 183.8 351.7 185.6 353.3 186.7 355 188.6 356.1 190.2 357.8 191.3 357.6 194.4 356.1 194.3 353.7 192.4 352.2 190.8 350.8 188.6 349.7 186.3 348 184.7ZM357 195.6 358.3 194.7 360.6 195.2 363.1 195.1 365.2 195.7 367.2 196.6 367 197.7 364.4 197.2 361.1 196.7 358.3 196.2ZM373.1 187.1 374.4 186.6 376.7 186.9 378.9 186.1 378.3 187.4 375 187.4 373.7 187.7 373.3 188.9 375 189.1 377 188.9 375.9 190 375 190.2 376.4 191.9 376.7 193.9 375.6 193.2 374.4 191.3 373.9 191.3 373.8 194.1 372.8 194.1 372.6 191.9 372 191 373.1 188.2ZM385.6 188.9 388.9 188.9 389.2 190.8 390.6 191.7 392.2 190.2 394.4 190.2 396.7 190.9 400.6 192.2 402.2 194.1 404.2 195 403.3 195.6 404.4 196.9 407.2 199.4 406.7 199.8 403.9 199.1 402.2 197.4 400.6 196.6 399.4 197.2 398.9 198.2 396.7 198.1 395 196.9 393.3 197.3 394.2 195.8 393.3 194.1 390.6 192.9 388.3 192.2 387.6 192.4 386.7 191.2 388.3 190.7 386.7 190.2 385.6 189.6ZM404.8 194.2 407.2 194.1 409.1 192.7 408.9 194.1 407.2 194.9 405 194.7ZM407.6 190.9 409.4 192.2 410 193.3 409.4 192.7 407.8 191.3ZM381.7 186 382.6 186.3 383 187.7 382.2 188.9 382 187.4ZM382.2 191.3 385.3 191.3 385 192 382.4 191.9ZM380 191.6 381.3 191.6 381.1 192.2 380.2 192.1ZM377.2 199.4 378.9 198 381.3 197.3 380.6 198.2 378.3 199.3ZM373.1 197.3 376.4 197.2 376.4 197.8 373.1 197.8ZM369.8 197.3 372.4 197.2 372.2 197.8 369.8 198ZM372.2 198.6 374.2 199 373.3 199.4 372.2 198.9ZM367.3 197.1 369.6 197.2 369.4 197.9 367.6 197.7ZM328.9 177.2 330.2 178.6 330.9 179.9 330.2 181.1 329.1 181.3 328.7 179.7ZM294.8 201.3 295.9 205 295 207.4 293.9 210.8 292.6 215.2 290.6 216.3 288.9 215.8 288.1 213 289.2 210.2 288.9 207.4 289.4 206 291.7 205.4 293.3 203.6ZM366.7 212.4 368.9 211.1 371.7 210.6 374.4 209.8 375.9 208 375.8 206.9 377.2 207.2 377.4 206 378.9 204.7 380.6 203.6 382.2 204.4 383.9 204.6 384.1 203 385 201.9 386.7 201.3 387.4 200.6 390 201.6 392 201.3 391.1 203 390.6 204.7 392.2 205.6 394.4 206.7 396.3 207.4 397.2 205.2 397.4 202.4 398 200 398.6 199.9 399.6 203 400.6 203.9 401.4 205.2 402.2 208 402.6 209.1 405 210.4 406.1 212.4 407.6 213.9 409.7 215.8 410.2 217.4 410.7 219.7 410 222.4 408.9 224.4 408 225.8 406.9 228 406.7 229.6 404.4 230.1 402.6 231.3 400.9 230.4 399.4 231.1 397.2 230.6 395.6 229.7 395 228 393.7 227.4 393.9 226.6 393.1 224.7 392.2 225.8 391.1 226.7 390.3 226.1 389.2 224.7 388.3 223.8 386.1 223 383.3 223.1 380.6 223.8 377.8 224.7 377.2 225.7 373.3 225.7 371.1 226.8 368.9 226.8 367.8 226.1 368.3 224.1 368.6 223 367.8 221.3 367.2 219.7 366.3 217.4 366.1 216.1 366.1 214.7ZM400.8 233.3 402.8 233.7 404.8 233.4 404.4 235.2 403.3 236.3 402.2 236.3 401.3 234.9ZM431.9 226.2 433.7 227.4 435 228.9 436.1 229.9 438.1 229.8 437.6 231.6 436.7 231.9 436.1 233.3 434.8 234.2 434.1 233.9 434.4 232.4 433.1 231.7 434.1 230.8 434.1 229.1 432.8 227.4ZM431.9 233 433.6 233.8 433.3 234.7 432 236.3 430.3 237.4 429.7 239 427.8 239.8 426.1 239.3 425 238.9 427 236.9 429.4 235.7 430.9 234.3ZM145.7 163.7 147.8 162.4 150.6 162.3 153.9 163.8 156.7 165 157.6 165.6 153.9 165.9 154.2 165.1 152.8 164.1 150 163.6 148.3 163ZM157.3 167.4 158.9 165.9 162.2 166 164 167.3 161.7 167.8 160.3 168.3 159.4 167.8ZM153 167.6 155.2 167.8 155 168.1 153.3 168.2ZM165.3 167.4 167 167.6 166.9 168 165.3 168ZM40 282.1 51.1 282.3 62.2 282.7 66.1 282.4 66.1 279.7 72.2 278.2 70 277.2 75.6 275.6 73.3 274.6 77.8 273.1 84.4 271.9 90 271.1 97.8 270.6 106.7 270.2 113.3 270.4 117.8 271.1 124.4 271.3 127.8 270 131.1 268.2 134.4 268.9 137.8 268 142.2 268.2 144.4 269.3 148 270.2 153.3 269.4 157.8 268.8 162.2 267.4 165 265.6 166.1 263.6 168.3 261.3 172.2 259.4 176.2 257.8 176.9 258.3 173.9 259.8 170.6 261.3 168.3 263.6 170 265.8 171.7 268.2 170 270.6 162.2 272.8 153.7 273.1 147.8 275.2 155.6 276.3 163.6 277.3 168.9 279.4 173.3 280.9 177.8 279.4 181.9 277.6 186.7 278.2 192.2 277.8 198.9 276.7 204.4 273.9 206.7 274.7 203.3 276.7 213.7 276.9 208.9 276 214.4 273.1 218.9 271.7 222.9 270.3 227.1 268.2 233.3 267.2 238.4 266.8 243.3 266.1 248 265.3 251.1 265.8 256.7 265.6 262.2 265.8 267.8 266 273.3 265 276.7 264.4 280 265 283.3 264.9 286.7 263.8 291.1 263 295.6 261.9 298.9 261.2 303.3 262 306.7 262.8 310 263 314.4 263.3 317.2 264.1 316.7 266.1 315 268 316.1 269.3 318.9 266.9 321.7 265.6 324.4 265 326.7 263.9 331.1 262.7 335.6 262.1 337.8 261.7 342.2 262 345.6 261.7 351.1 261.1 354.4 261.1 357.8 262 362.2 261.6 365.6 261.1 368.9 262 373.3 262 376.7 261.7 380 261.8 384.4 261.3 388.9 261.4 392.2 261.7 395.6 262.1 398.9 262.3 402.2 263 406.7 264 411.1 264.4 415.6 265.2 420 266.3 424.4 266.4 428.9 267.4 429.4 268.6 425.6 269.7 423.3 271.3 421.1 273 422.2 274.7 417.8 275.8 418.9 277.4 415.6 278.6 421.1 279.7 426.7 280.6 433.3 281.3 440 281.7 440 288 40 288ZM183.3 276.3 186.7 274.7 190 275 190 277.2 185.6 277.6ZM156.7 264.7 162.2 264.7 163.3 267.4 157.8 268.6 155.6 266.9ZM57.8 275.8 62.2 275.6 61.1 276.9 58.3 276.9Z"/>
</g>
<g fill="none" stroke="#000000" stroke-width="1.25" stroke-linejoin="round">
<path d="M53.3 115.1 57.8 114.1 60 114.7 58.3 113.6 55.6 112.1 58.9 111.3 60 109.9 66.1 108.8 71.1 109.3 75.6 109.9 81.1 110.2 83.3 110.7 87.8 111.3 90 110.8 92.2 110.8 96.7 110.2 97.8 109.7 101.1 110.2 102.2 110.9 105.6 110.4 110 111.3 112.2 112.4 113.9 112.7 117.8 112.4 120 113 120 111.8 122.8 111.9 126.7 112.7 130.6 112.7 131.1 111.9 133.3 112.2 133.9 113.2 132.8 111.3 133.3 110.2 132.8 108.6 135 108 136.7 109.1 137.8 110.2 138.3 110.8 140 111.9 142.2 113 142.2 111.3 145.6 110.4 148.9 110.6 149.7 111.9 148.9 113.6 147.8 114.4 145 114.1 143.3 115.4 142.2 116.7 140 116.9 137.8 118 135.6 119.7 134.8 121.3 135 122.7 136.7 122.8 137.2 124.7 140 124.7 142.2 125.2 145.6 126.6 148.6 126.8 148.7 129.1 150 130.2 150.6 131 152.2 130.8 152.2 129.1 152.2 127.4 154.4 126.1 155 124.7 152.8 122.8 153.9 121.3 153.3 118.8 157.8 118.8 160 119.7 162.2 120.2 162.8 122.4 164.4 123.2 166.7 122.7 167.8 121 171.1 124.1 172.2 125.8 175.6 127.1 176.7 128.6 178 130.2 176.7 130.9 173.3 132.2 168.9 132.1 166.1 132.2 163.9 133.6 162.2 135.2 164.4 133.9 167.8 133.3 168.6 133.8 167.8 134.7 168 135.8 168.9 136.7 172.2 135.8 173.3 136.9 169.4 138.4 167 139.7 166.4 138.8 168.3 137.6 165.6 138 165.6 138.3 163.3 139.1 161.7 139.9 161.3 140.8 162.2 141.6 160.6 142 157.8 142.8 157.8 144.1 156.7 145.2 155.6 146.9 156.1 148.8 154.4 149.7 153.3 150.3 151.7 151.3 150 152.4 149.7 154.1 150.6 156.3 151.1 158.2 150.8 159.9 149.8 160 149.1 158.9 148.1 157.1 148.1 155.8 146.7 154.7 145 155 143.9 154.2 142.2 154.3 140.6 154.4 140.8 155.6 138.9 155.4 136.7 155 134.8 155.3 133.3 156.3 131.9 157.4 132 159.1 131.4 161.3 131.3 163.2 132 165 133 166.6 134.4 167.3 135.6 167.7 137.8 167.3 139.1 166.6 139.6 164.7 141.7 164.1 143.3 164.1 142.8 166.3 142.2 167.4 141.9 169.1 141.3 170.2 142.2 170.4 144.4 170.3 146.7 170.4 147.6 171.3 147.2 173.6 147 175.8 147.8 176.9 148.9 178 150 178.2 151.3 177.4 153.3 177.7 154.1 178.6 153.4 180 152.9 178.8 151.7 178.1 150.8 178.9 150.9 179.9 149.4 179.6 147.8 178.8 147 178.2 145.6 176.9 144.7 175.9 143.3 174.1 142.6 173.3 140.6 173 138.3 172.4 136.7 170.8 135 170 132.8 170.6 130.6 169.9 128.9 169.1 126.7 168 124.4 166.9 122.8 165.4 123 164.1 122.2 162.4 120.6 160.8 118.9 159.4 118.3 158 116.7 156.9 115 155.2 114.2 153.3 112.4 152.7 112.6 154.1 113.9 155.8 115 157.4 116.7 159.7 117.4 161 118.3 162.2 117.6 162.4 115.6 160.6 115.2 159.1 113.3 158 113 156.9 112.2 155.2 111.1 153.8 109.9 151.9 108.4 150.2 106.1 149.7 104.6 147.3 103.9 146 102.4 144.1 101.9 143.1 102.1 141.3 102.1 139.1 102.3 136.7 101.4 134.2 103.3 134.1 103.9 135.2 103.6 133.6 102.2 132.4 98.9 131.3 97.8 129.7 95.6 127.4 94.4 126.3 92.2 124.7 90 123 87.8 122.8 85 121.6 82.2 121.3 80 121.3 77.8 120.2 75.6 120.4 74.4 121.3 71.7 122.1 72.2 120.2 70.6 120.8 69.4 122 68.3 123 66.1 124.4 63.9 125.8 61.1 126.7 58.9 127.1 56.9 127.3 60 126.1 61.7 125.8 63.9 124.7 65 122.8 63.3 122.8 61.7 122.7 60 122.4 60 121.3 57.8 120.8 56.1 119.7 56.7 118.2 58.3 117.8 61.1 117.2 61.1 116.3 58.9 116.3 55.6 116.3Z"/>
<path d="M158.9 101.1 164.4 100 167.8 98.6 172.2 97.1 182.2 96.6 190 96.3 195.6 95.4 204.4 95.1 212.2 95.8 217.8 96.9 226.7 97.2 220 99.1 218.9 100.8 217.8 102.4 218.9 103.6 217.8 104.7 218.3 105.8 215.6 106.9 215.6 108.6 213.3 109.7 215 110.1 211.1 111.6 206.7 112.2 203.3 113.3 200 114.8 196.1 115.2 194.4 116.9 192.8 119.1 192.2 121 190.6 121.4 188.9 120.6 186.1 120 184.4 118.6 182.8 116.9 181.7 115.2 180.3 113.6 181.1 111.9 183.3 110.8 179.4 109.7 178.9 108 177.2 105.8 175 103.9 171.1 103.3 165.6 103.6 161.1 102.4Z"/>
<path d="M166.7 119.1 161.1 118 157.8 116.6 153.9 116.6 153.3 115.2 157.8 114.7 158.9 112.4 154.4 110.8 152.2 110.2 145.6 110.2 141.1 109.1 140 106.9 145.6 106 150 106.1 154.4 107.1 157.8 108.2 161.1 109.1 164.4 110.2 165.6 111.3 168.9 112.8 171.7 113.8 170 115.4 167.8 115 164.4 114.7 168.3 116.3 167.8 118 164.4 117.4Z"/>
<path d="M109.4 110.2 113.3 111.1 117.8 111.7 123.3 111.3 127.2 110.6 127.8 109.7 123.9 109.1 123.3 107.1 120 106.6 116.7 107.2 113.3 106.7 108.9 107.2 107.8 108.6Z"/>
<path d="M101.1 108 103.3 108.9 106.1 108.6 107.8 107.4 111.1 106.6 109.4 105.6 105.6 105.2 101.7 105.6Z"/>
<path d="M142.2 103 151.1 103.3 153.3 102.4 156.7 100.8 160 99.7 164.4 98.3 171.1 96.7 171.1 96 162.2 95.7 153.3 95.8 144.4 96.7 138.9 97.4 142.2 98.8 144.4 99.7 142.2 101.3Z"/>
<path d="M133.3 99.1 136.7 100.8 142.2 100.8 143.3 99.1 137.8 97.8Z"/>
<path d="M137.8 105 145.6 105.2 151.1 104.9 151.1 103.9 145.6 103.2 140 102.8 133.3 102.7 133.3 103.9Z"/>
<path d="M133.9 108 140 107.1 140 105.8 134.4 105.8Z"/>
<path d="M126.7 108 132.2 108.6 132.8 106.3 127.8 106Z"/>
<path d="M110 104.4 117.8 105.2 122.2 104.7 122.2 103.6 117.8 103.2 111.1 103Z"/>
<path d="M124.4 104.4 131.1 104.7 131.1 103 125.6 103Z"/>
<path d="M103.3 103.6 111.1 103.2 110 102.1 104.4 102.4Z"/>
<path d="M143.3 117.4 146.7 118.6 150.6 117.2 151.1 115.8 146.7 114.7 143.9 115.2Z"/>
<path d="M174.1 135.1 177.8 136 181.1 136.1 181.4 135 180.6 133.2 178.3 132.4 178.3 130.7 176.3 131.7 175 133.6Z"/>
<path d="M97.4 131.7 100.6 132.2 102.8 134.1 101.3 134.1 99.4 133Z"/>
<path d="M40 115.8 42.2 115.2 45.6 116.3 47.8 116.6 48.9 115.8 51.1 114.7 48.9 113.6 45.6 113 42.2 112.1 40 111.6Z"/>
<path d="M154.1 178.6 154.7 179.1 156.1 176.3 156.9 175.8 158.9 175.2 160.6 174.2 160.6 175.8 162.2 175.2 162.2 174.4 163.9 176.3 166.7 176.2 168.3 176.7 171.1 176.1 171.3 176.9 172.4 178.6 173.9 179.1 175.6 180.4 176.7 181.3 178.9 181.3 180.6 181.8 182.2 182.7 183.3 183.6 184.4 186 184.4 187.7 186.1 188.6 187.2 188.7 190 189.7 191.1 190.8 193.3 191.1 195.6 191.1 197.2 192.1 198.9 193.3 200.8 193.8 201.3 196 201.1 198 199.4 199.7 198.3 201.3 197.2 202.4 196.7 204.7 196.7 207.4 195.9 209.7 194.7 211.9 193.3 213.6 190.6 213.8 188.3 214.9 186.7 216.1 186 218 185.6 219.9 183.9 221.9 182.2 223.8 180.7 225.6 179.4 226.7 177.8 226.8 175.8 226.3 175.1 225.8 176.4 227.4 176.7 228.6 175.9 230.4 173.9 231.1 171.1 231.3 170.9 233.2 167.8 233.6 167.8 235.2 169.3 235.4 167.4 236.9 167.2 238.1 165 239.1 166.1 240.2 166.9 241.2 164.9 243 163.3 244.3 164 246.1 164.1 246.7 165 248 167.6 248.8 166.1 249.2 163.9 249.7 162.2 249.4 160 248.3 157.8 246.7 156.7 245.2 156.1 242.4 156.1 240.2 157.2 238.6 158.3 236.9 158.9 234.7 157.8 233.6 158.1 231.9 158.3 229.3 159.2 227.4 160.3 225.2 160.6 222.4 160.7 220.2 161.2 218 161.7 215.8 161.8 213.6 162 210.8 161.9 208.3 160.6 207.2 158.3 206.1 156.4 205 155.2 203.3 154.2 201.3 153.1 199.1 152.2 197.1 151.2 195.6 149.8 194.7 149.7 192.8 150.8 191.8 151.3 190.8 150.1 190.4 150.6 188.9 151.1 187.7 152.2 186.7 152.4 185.2 153.9 183.8 154.1 181.9 153.9 180.2 153.4 180Z"/>
<path d="M233.4 148.2 234.1 148.1 236.7 148.8 238.9 148.6 241.1 147.4 243.3 147 246.7 146.9 249.6 146.9 251.1 146.6 252.2 146.9 251.7 148 251.9 149.7 251.1 150.2 252.2 151 253.9 151.4 256.9 152 258.3 153.3 260.6 154.2 262.2 153.6 262.2 152.1 264.4 151.4 266.1 152.2 267.8 152.9 270 153.2 272.2 153.7 273.9 153 275.6 153.2 278 153.2 276.2 154.7 276.3 156.3 277.6 158 278.9 160.2 279.6 161.9 281 163.6 281.4 165.2 281.6 167.1 282.9 168 283.7 170.2 284.4 171.3 286.1 172.8 287.8 173.9 288.1 175 287.8 175.2 289.4 176.4 292.2 175.7 294.4 175.3 296.9 174.8 296.7 176.4 295.6 179.1 293.3 182.4 291.1 184.9 288.9 186.8 286.7 189.1 285.6 190.4 284.4 191.9 283.7 193.6 283.1 195.2 283.9 196.9 283.9 199.1 285 199.9 285.1 202.4 285.2 204.7 283.9 206.6 281.1 207.8 279.4 209.7 278.7 210.8 279.3 212.4 279.4 214.7 276.7 216.3 276.6 217.8 276.1 219.7 274.4 221.3 273.3 222.8 271.4 224.4 269.4 225.6 267.8 225.8 264.4 226 262.2 226.7 260.4 226.1 260.3 224.3 259.2 222.4 258.3 219.8 256.9 218 256.1 214.7 256.1 213 254.8 210.8 253.3 208 253.1 206.3 253.7 204.7 255 201.9 255.3 200.2 254.4 198 253.7 194.8 253.3 193.6 252.2 192.4 250.3 190.2 249.8 188.8 250.6 187.4 250.8 185.8 250.9 184.1 249.8 183 247.8 183.1 246.7 183.2 245.6 181.9 244.8 181 242.8 181 241.1 181.3 238.9 182.2 237.2 182.6 235.6 182.2 233.3 182.7 231.7 183.1 230 182.4 227.8 180.7 226.1 179.7 225.2 178.6 225 177.1 223.3 175.8 221.4 174.2 221.3 173 220.6 171.7 221.7 170.2 221.9 168 222 166.3 221.1 164.7 222.2 161.9 223.9 159.1 225.6 157.1 227.2 156.3 228.9 155.2 229.2 153.6 229.7 151.9 231.7 150.6 232.8 149.7Z"/>
<path d="M233.9 148 235 147.2 237.8 147.1 239.4 145.8 240 144.9 239.7 144.1 240.9 142.4 243.6 141.3 243.3 140 245 139.8 246.7 140.1 248.3 139.3 250 138.8 251.4 139.7 252.2 140.9 253.9 141.9 255.6 142.7 257.4 143.6 257.8 144.9 257.4 145.8 258.3 145.6 259.1 144.7 258.3 143.9 258.9 143 260.6 143.6 260.3 142.9 257.8 141.6 256.7 141.3 255.6 140.7 255 139.6 253.7 138.8 253.7 137.7 255.2 137.2 255.6 138 256.7 138.6 257.2 139.3 258.9 140.2 260.6 140.9 261.7 141.7 261.6 143.2 262.2 144.1 263.3 145.3 263.9 146.9 264.8 147.4 265.6 147.4 265.8 146.3 266.7 146.1 266.1 145.2 265.3 144.1 265.3 143 266.4 143.6 267.2 142.7 268.9 142.7 269.2 143.3 269.1 144.1 269.8 145.2 270.3 146.9 271.3 147.2 272.8 147.8 274 147.1 275.6 147.8 277.8 147.7 279.8 147.3 280 148.6 279.8 149.7 279 151.3 278.3 153 278 153.2 276.1 153.4 276.2 154.7 277.2 156.7 278 157.1 278.8 155.2 278.9 156.9 280.6 159.1 281.4 161 282.8 163 283.6 164.7 284.4 166.3 286.1 168.2 287.2 170 287.8 172.4 288.3 173.9 290 173.8 293.3 172.4 295.6 171.3 298 170 300 169.1 301.4 168.3 303.3 167 304.2 165.4 305.6 164.1 306.4 163 305.1 161.8 303.3 161.3 302.7 160.3 302.7 158.8 302.2 159.4 300.6 161 297.8 161.3 297.3 160.2 297 159.1 296.4 160.2 295.7 158.9 294.4 157.4 293.3 155.2 293.9 154.7 295.6 154.7 296.4 156 298.3 157.4 300.6 158.4 302.8 158 303.7 159.4 305.6 159.8 308.3 160 311.1 159.9 313.9 159.8 314.8 160.8 316.1 161.9 317.8 163 316.7 163.2 317.8 164.7 320 164.7 320.8 163.9 320.9 166.9 321.4 169.7 322.6 171.9 323.3 174.3 324.4 176.9 325.6 178.8 326.2 179 326.9 178.1 328 177.7 328.7 176.6 329.1 173.6 329 171 330.6 169.9 331.7 169.3 333.3 167.7 335 166.1 336.7 165 336.7 164.1 338.3 163.8 340 163.6 341.7 163 342.2 164.7 342.8 165.8 344.8 167.4 345 170.2 346.1 170.4 347.8 169.4 348.6 170.8 349.1 173 349.7 175.2 349.4 176.9 349.2 178.9 350.6 180.2 351.4 181.3 351.7 183 352.6 184.9 354.9 186.4 355.8 186.4 355 184.9 354.9 183 353.7 181.1 352.2 180.3 351.3 178.6 350.3 177.7 350.9 175.2 351.1 173.1 352.2 173.2 352.2 174 353.9 174.7 354.4 175.8 356.1 176.3 356.7 178 356.4 178.4 358.6 177.4 358.6 176.3 359.4 176.3 361.1 175.2 361.4 173.6 361.1 171.3 360 169.9 358.9 169.1 357.8 167.4 357.4 166.7 358.6 165.2 360 164.1 361.7 164.1 362.2 165.3 362.8 164.3 364.4 163.9 366.1 163.2 367.2 163 369.4 162.3 371.1 160.8 372.8 159.4 373.6 158 375 156.3 375.6 154.7 374.4 153.9 375.4 153 374.2 151.6 373.7 150 372.6 149.1 373.9 147.8 376.1 146.9 375.9 146.3 374.2 146.1 372.2 146.6 371.1 145.6 370.8 144.7 372.2 144.3 374.4 142.8 375.6 143 374.8 144.7 375.6 144.6 378.1 143.7 379.2 144.9 378.7 145.8 380.6 146.6 380.4 148 380.3 149.7 381.7 149.4 383.3 148.9 383.8 147.4 383.7 146.3 382.6 145 381.7 143.9 384.1 142.4 385 141 386.7 140 388.3 140.4 390.6 138.8 392.8 136.9 394.4 134.9 396.1 132.4 396.1 130.2 397 128.9 395.6 128 392.8 128 390.3 127.2 392.8 125.2 395.6 123.6 398.3 122.1 401.7 122 405.6 121.8 408.9 122.4 412.2 121.9 411.7 120.8 414.4 119.4 417.8 119.3 421.1 118.6 422.2 119.7 417.8 120.8 414.4 123.6 413 125 412.8 126.9 413.3 129.7 414.1 131.3 415.9 130 417.8 128 420 126.9 420.6 125.4 421.4 123.8 420.6 123.6 422.8 121.6 425 121.3 428.9 121.3 431.1 120.2 434.4 118.9 438.9 118.6 439.4 116.3 437.2 116.1 438.3 114.7 440 115.2 440 111.4 436.7 110.8 432.2 110.4 429.4 110.2 428.9 111.3 425.6 110.8 420 110.7 417.8 110.2 414.4 109.1 408.9 109.1 406.7 108 402.2 107.7 396.7 107.1 395 108.6 390 108.6 386.7 109.1 384.4 109.1 383.3 108 381.1 106.6 377.8 106.1 372.2 106.9 366.7 106.1 362.2 105.8 364.4 103 358.9 102.4 355.9 101.7 351.1 103 345.6 103.6 340 104.1 336.7 104.7 335.6 106 330 106.3 329.4 108 326.7 107.7 323.3 107.1 322.8 108.6 321.7 111.9 320 114.1 318.9 114.1 320.6 111.6 320.9 108.8 320.9 107.1 316.7 106.9 314.4 109.1 314.4 111.3 316.7 112.1 313.9 111.3 311.7 111 307.2 110.4 306.7 111.9 301.1 111.9 300 112.2 298.9 111.6 293.9 112.8 291.1 112.4 288.9 111.9 288.3 111.8 288.9 114.1 286.7 114.2 284.4 115.8 285 116.3 282.2 116.9 281.1 115.8 278.7 116.4 278.3 115.2 276.1 113.9 278.9 114.1 282.8 114.7 285.6 113.8 285.6 112.7 282.2 111.9 277.2 111 274.4 110.2 271.7 109.1 268.6 109 265.6 109.7 262.2 110.4 259.4 111.3 257.2 112.2 255.6 113.6 253.9 115.2 252.2 116.3 250.6 117.4 247.8 118.2 245.8 119.1 245.6 120.8 246.1 122.4 247.8 123.6 249.4 123.2 251.7 122.1 252.4 122.7 253.1 123.9 254.1 125.6 254.4 126.4 255.9 126.3 256.7 125.7 258.3 125.2 258.6 123.8 258.9 122.8 260.6 121.9 260.9 121.1 259.2 120.6 259.1 119.1 260 118.2 262.8 117.1 263.9 116 264.8 114.9 266.9 114.9 268.1 115.8 267.2 116.7 265 117.8 263.7 118.6 263.9 120.2 265 121 265.6 121.4 267.8 121.1 270 120.8 271.7 120.7 273.6 121.4 271.1 121.8 268.9 121.9 266.7 122 266.1 123 267.2 123.2 267 124.3 265.6 124.7 265 123.9 263.9 124.2 263.3 125.8 263.3 126.9 262.2 127.3 261.1 127.6 260.6 127.1 258.3 127.4 255.9 128 253.9 127.6 252.2 128 251.1 127.4 250.9 126.3 251.7 125.2 251.7 124 249.1 124.7 249.1 126.3 249.7 128 247.8 128.4 245.6 128.9 245 129.9 243.9 130.9 242.8 131.3 241.8 131.9 240.2 132.9 238.6 133.1 238.2 133.9 236.7 133.8 234.8 134.2 235.2 134.9 237.2 135.4 237.8 136.3 238.7 137.1 238.6 138.6 238 139.8 235.6 139.7 233.3 139.6 231.1 139.4 229.8 140.2 230.2 141.9 230.2 143.6 229.4 144.9 230.2 145.6 230.1 146.9 231.7 146.7 232.8 147.1 233.3 147.8Z"/>
<path d="M233.9 132.4 236.1 132.1 238.9 131.7 241.4 131.1 241.8 129.4 240.3 129.1 239.8 127.8 238.3 126.9 237.8 125.8 237.2 124.7 237.8 124 235.6 123.9 236.4 122.9 234.4 122.9 233.6 124.1 233.9 125.8 234.7 126.9 236.4 127 236.7 128.2 236.4 128.8 235 128.9 235.3 129.9 234.2 130.4 236.1 130.9 235.2 131.3Z"/>
<path d="M233.3 130 233.1 128.6 233.8 127.4 232.8 126.7 230.9 126.8 230.6 127.7 228.9 128 229.4 129.1 228.7 130.2 229.4 130.8 231.1 130.4Z"/>
<path d="M213 115.2 215 114.2 217.2 114.9 220 114.4 222.2 114.1 223.9 114.7 224.9 115.8 223.3 116.6 219.4 117.6 216.7 117.1 214.8 117.1 215.6 116.3 213.3 115.9 215.6 115.4Z"/>
<path d="M252.2 99.6 255.6 101.8 258.9 102.8 260.6 101.8 258.3 100.7 263.3 100.7 261.1 99.6 257.8 99.1 255 99.3Z"/>
<path d="M297.2 108.6 298.9 109.3 303.9 109.4 301.7 107.4 302.2 105.8 306.7 103.6 316.1 102.7 313.3 102.4 308.9 103.2 303.3 104.3 301.1 106.3 298.3 107.4Z"/>
<path d="M346.1 100 351.1 100.3 352.2 99.3 348.3 98.8Z"/>
<path d="M292.2 98.6 295.6 98.9 297.8 98.3 294.4 98.1Z"/>
<path d="M392.8 104.3 394.4 105 398.3 104.8 398.9 103.8 395 103.4Z"/>
<path d="M260 99.1 264.4 99.8 270 99.2 268.9 98.7 262.2 98.6Z"/>
<path d="M263.9 101.1 265.6 102 267.2 101.6 266.1 101Z"/>
<path d="M300 98.8 304.4 99 305.6 98.3 301.1 98.2Z"/>
<path d="M306.7 98.2 311.1 98.4 312.2 97.9 307.8 97.7Z"/>
<path d="M301.1 97.7 304.4 97.8 305 97.2 302.2 97.1Z"/>
<path d="M351.1 100.7 353.9 101.2 356.7 100.9 354.4 100.1Z"/>
<path d="M344.4 98.3 346.7 98.8 348.9 98.3 346.7 97.8Z"/>
<path d="M399.4 103.9 401.7 104.7 403.3 104.3 401.1 103.7Z"/>
<path d="M403.9 104.3 405.6 104.9 407.8 104.7 406.1 104.2Z"/>
<path d="M395.6 106 397.2 106.6 399.4 106.6 398.3 105.9Z"/>
<path d="M438.3 109.1 440 109.3 440 108.6 438.9 108.6Z"/>
<path d="M40 109.3 42.8 108.9 41.1 108.4 40 108.6Z"/>
<path d="M397.8 127.7 398.9 129.1 399.2 131.3 400 133.6 398.9 135.8 399.4 136.9 397.8 136.9 397.8 134.7 397.8 131.3 397.4 128.8Z"/>
<path d="M395.6 141.9 397.2 140.8 398.9 141.3 401.7 139.9 400.6 139.1 397.8 137.4 397.2 139.7 395.6 140.8Z"/>
<path d="M397 142.1 397.8 144.1 396.7 145.8 396.4 147.4 396.1 148.9 395 149.1 393.9 149.4 392.2 149.6 391.1 150.8 390 150.2 390 149.6 387.8 149.9 385.6 150.2 385.6 149.7 387.2 148.7 389.4 148.4 391.1 148.3 392 146.6 392.8 147.1 394.2 146 395.6 144.1 395.6 142.7Z"/>
<path d="M385.6 150.3 386.4 151.3 385.9 153.2 384.7 153.3 384.4 151.9 384.1 151Z"/>
<path d="M387.2 150.2 389.4 150 389.2 150.7 387.8 151.6 387 151Z"/>
<path d="M374.4 160 375.6 160.2 374.8 162.4 374.2 163.6 373.4 162.4Z"/>
<path d="M360.8 166.6 362.2 165.7 363.3 166.2 362.2 167.6 360.8 167.4Z"/>
<path d="M373.9 167.4 375.8 167.6 375.9 169.7 375 170.8 375.3 172.2 377.8 173.6 377.2 173.9 376.1 172.7 374.4 172.8 373.7 171.7 373.3 170.2Z"/>
<path d="M375.6 180.2 377.2 178.4 379.4 177.2 380.6 179.1 380.2 180.8 379.4 181.7 377.8 180.8 376.7 179.7Z"/>
<path d="M378.1 174.1 379.4 174.3 379.4 176.3 378.3 176.7 378.7 175.4Z"/>
<path d="M375.6 174.9 376.9 175.4 377 177.4 376.1 177.4 375.9 176Z"/>
<path d="M370.2 178.6 371.7 177.4 372.9 175.4 372.4 176.6 371.1 178.2Z"/>
<path d="M373.8 173.1 374.9 173.2 374.8 174.3 374.2 174.1Z"/>
<path d="M361.1 187.7 361.4 186 362.8 186.1 363.9 185 365.6 184.4 366.7 183 368.3 181.9 369.7 180.3 370.8 181 372.2 182.2 371.1 183.2 370.8 184.1 371.1 185.6 372.2 186.9 370.9 187.1 370.6 188.9 369.4 189.7 369.2 191.9 367.4 192.6 365.6 191.7 363.9 191.7 362.4 191.1 362.2 189.4Z"/>
<path d="M345.9 181.8 348.3 182.2 349.7 183.8 351.7 185.6 353.3 186.7 355 188.6 356.1 190.2 357.8 191.3 357.6 194.4 356.1 194.3 353.7 192.4 352.2 190.8 350.8 188.6 349.7 186.3 348 184.7Z"/>
<path d="M357 195.6 358.3 194.7 360.6 195.2 363.1 195.1 365.2 195.7 367.2 196.6 367 197.7 364.4 197.2 361.1 196.7 358.3 196.2Z"/>
<path d="M373.1 187.1 374.4 186.6 376.7 186.9 378.9 186.1 378.3 187.4 375 187.4 373.7 187.7 373.3 188.9 375 189.1 377 188.9 375.9 190 375 190.2 376.4 191.9 376.7 193.9 375.6 193.2 374.4 191.3 373.9 191.3 373.8 194.1 372.8 194.1 372.6 191.9 372 191 373.1 188.2Z"/>
<path d="M385.6 188.9 388.9 188.9 389.2 190.8 390.6 191.7 392.2 190.2 394.4 190.2 396.7 190.9 400.6 192.2 402.2 194.1 404.2 195 403.3 195.6 404.4 196.9 407.2 199.4 406.7 199.8 403.9 199.1 402.2 197.4 400.6 196.6 399.4 197.2 398.9 198.2 396.7 198.1 395 196.9 393.3 197.3 394.2 195.8 393.3 194.1 390.6 192.9 388.3 192.2 387.6 192.4 386.7 191.2 388.3 190.7 386.7 190.2 385.6 189.6Z"/>
<path d="M404.8 194.2 407.2 194.1 409.1 192.7 408.9 194.1 407.2 194.9 405 194.7Z"/>
<path d="M407.6 190.9 409.4 192.2 410 193.3 409.4 192.7 407.8 191.3Z"/>
<path d="M381.7 186 382.6 186.3 383 187.7 382.2 188.9 382 187.4Z"/>
<path d="M382.2 191.3 385.3 191.3 385 192 382.4 191.9Z"/>
<path d="M380 191.6 381.3 191.6 381.1 192.2 380.2 192.1Z"/>
<path d="M377.2 199.4 378.9 198 381.3 197.3 380.6 198.2 378.3 199.3Z"/>
<path d="M373.1 197.3 376.4 197.2 376.4 197.8 373.1 197.8Z"/>
<path d="M369.8 197.3 372.4 197.2 372.2 197.8 369.8 198Z"/>
<path d="M372.2 198.6 374.2 199 373.3 199.4 372.2 198.9Z"/>
<path d="M367.3 197.1 369.6 197.2 369.4 197.9 367.6 197.7Z"/>
<path d="M328.9 177.2 330.2 178.6 330.9 179.9 330.2 181.1 329.1 181.3 328.7 179.7Z"/>
<path d="M294.8 201.3 295.9 205 295 207.4 293.9 210.8 292.6 215.2 290.6 216.3 288.9 215.8 288.1 213 289.2 210.2 288.9 207.4 289.4 206 291.7 205.4 293.3 203.6Z"/>
<path d="M366.7 212.4 368.9 211.1 371.7 210.6 374.4 209.8 375.9 208 375.8 206.9 377.2 207.2 377.4 206 378.9 204.7 380.6 203.6 382.2 204.4 383.9 204.6 384.1 203 385 201.9 386.7 201.3 387.4 200.6 390 201.6 392 201.3 391.1 203 390.6 204.7 392.2 205.6 394.4 206.7 396.3 207.4 397.2 205.2 397.4 202.4 398 200 398.6 199.9 399.6 203 400.6 203.9 401.4 205.2 402.2 208 402.6 209.1 405 210.4 406.1 212.4 407.6 213.9 409.7 215.8 410.2 217.4 410.7 219.7 410 222.4 408.9 224.4 408 225.8 406.9 228 406.7 229.6 404.4 230.1 402.6 231.3 400.9 230.4 399.4 231.1 397.2 230.6 395.6 229.7 395 228 393.7 227.4 393.9 226.6 393.1 224.7 392.2 225.8 391.1 226.7 390.3 226.1 389.2 224.7 388.3 223.8 386.1 223 383.3 223.1 380.6 223.8 377.8 224.7 377.2 225.7 373.3 225.7 371.1 226.8 368.9 226.8 367.8 226.1 368.3 224.1 368.6 223 367.8 221.3 367.2 219.7 366.3 217.4 366.1 216.1 366.1 214.7Z"/>
<path d="M400.8 233.3 402.8 233.7 404.8 233.4 404.4 235.2 403.3 236.3 402.2 236.3 401.3 234.9Z"/>
<path d="M431.9 226.2 433.7 227.4 435 228.9 436.1 229.9 438.1 229.8 437.6 231.6 436.7 231.9 436.1 233.3 434.8 234.2 434.1 233.9 434.4 232.4 433.1 231.7 434.1 230.8 434.1 229.1 432.8 227.4Z"/>
<path d="M431.9 233 433.6 233.8 433.3 234.7 432 236.3 430.3 237.4 429.7 239 427.8 239.8 426.1 239.3 425 238.9 427 236.9 429.4 235.7 430.9 234.3Z"/>
<path d="M145.7 163.7 147.8 162.4 150.6 162.3 153.9 163.8 156.7 165 157.6 165.6 153.9 165.9 154.2 165.1 152.8 164.1 150 163.6 148.3 163Z"/>
<path d="M157.3 167.4 158.9 165.9 162.2 166 164 167.3 161.7 167.8 160.3 168.3 159.4 167.8Z"/>
<path d="M153 167.6 155.2 167.8 155 168.1 153.3 168.2Z"/>
<path d="M165.3 167.4 167 167.6 166.9 168 165.3 168Z"/>
<path d="M40 282.1 51.1 282.3 62.2 282.7 66.1 282.4 66.1 279.7 72.2 278.2 70 277.2 75.6 275.6 73.3 274.6 77.8 273.1 84.4 271.9 90 271.1 97.8 270.6 106.7 270.2 113.3 270.4 117.8 271.1 124.4 271.3 127.8 270 131.1 268.2 134.4 268.9 137.8 268 142.2 268.2 144.4 269.3 148 270.2 153.3 269.4 157.8 268.8 162.2 267.4 165 265.6 166.1 263.6 168.3 261.3 172.2 259.4 176.2 257.8 176.9 258.3 173.9 259.8 170.6 261.3 168.3 263.6 170 265.8 171.7 268.2 170 270.6 162.2 272.8 153.7 273.1 147.8 275.2 155.6 276.3 163.6 277.3 168.9 279.4 173.3 280.9 177.8 279.4 181.9 277.6 186.7 278.2 192.2 277.8 198.9 276.7 204.4 273.9 206.7 274.7 203.3 276.7 213.7 276.9 208.9 276 214.4 273.1 218.9 271.7 222.9 270.3 227.1 268.2 233.3 267.2 238.4 266.8 243.3 266.1 248 265.3 251.1 265.8 256.7 265.6 262.2 265.8 267.8 266 273.3 265 276.7 264.4 280 265 283.3 264.9 286.7 263.8 291.1 263 295.6 261.9 298.9 261.2 303.3 262 306.7 262.8 310 263 314.4 263.3 317.2 264.1 316.7 266.1 315 268 316.1 269.3 318.9 266.9 321.7 265.6 324.4 265 326.7 263.9 331.1 262.7 335.6 262.1 337.8 261.7 342.2 262 345.6 261.7 351.1 261.1 354.4 261.1 357.8 262 362.2 261.6 365.6 261.1 368.9 262 373.3 262 376.7 261.7 380 261.8 384.4 261.3 388.9 261.4 392.2 261.7 395.6 262.1 398.9 262.3 402.2 263 406.7 264 411.1 264.4 415.6 265.2 420 266.3 424.4 266.4 428.9 267.4 429.4 268.6 425.6 269.7 423.3 271.3 421.1 273 422.2 274.7 417.8 275.8 418.9 277.4 415.6 278.6 421.1 279.7 426.7 280.6 433.3 281.3 440 281.7 440 288 40 288Z"/>
<path d="M183.3 276.3 186.7 274.7 190 275 190 277.2 185.6 277.6Z"/>
<path d="M156.7 264.7 162.2 264.7 163.3 267.4 157.8 268.6 155.6 266.9Z"/>
<path d="M57.8 275.8 62.2 275.6 61.1 276.9 58.3 276.9Z"/>
</g>
<g fill="none" stroke="#000000" stroke-width="1.1" stroke-linejoin="round" stroke-linecap="round">
<path d="M83.3 110.7 83.3 121 85.6 121.3 87.2 122.4 89.4 121.7 91.7 123 93.3 124.7 95.6 125.8 95.3 126.9M103.6 133.6 134.2 133.6 134.9 133.9 137.8 134.3 140.6 134.7 141.7 134.3 145.8 136 147.2 136.9 148.3 137.7 148.4 140.2 147.8 141.3 152.2 140.4 152.2 139.7 155 139.1 156.7 138 160.6 138 161.9 136.6 163.1 135.3 164.7 135.8 164.7 137.2 165.6 138M109.9 151.9 112.6 151.7 116.7 153.2 119.8 153.2 119.8 152.7 121.7 152.7 123.9 155.1 125.6 155.8 126.1 154.9 127.8 155.1 129.4 157.4 132 159.1M137.6 171.9 138.1 170.1 139.6 170.1 138.9 168.9 138.9 168.2 140.9 168.2 141.9 167.4M140.9 168.2 140.9 170.3 141.3 170.3M142 170.6 140.8 172 139.9 172.8M140.8 172 142.4 173M143 173.6 144.4 172.7 145.9 171.7 147.6 171.3M144.8 175.7 147 175.9M147.9 179 148.2 177.3M153.4 180 154.1 178.6M160.3 166.1 160.2 168.2M160.8 174.9 159.4 176.3 158.9 177.8 159.7 179.1 160 180.2 162.2 180.2 162.8 181.2 165 181.1 164.7 183 165.2 185.2 165.7 186.7M165.7 186.7 162.4 186.1 162.8 187.3 162.2 188.2 162.9 189.3 162.3 192.7M162.3 192.7 161.7 192.2 160 190.8 158.3 189.7 156.4 188.1M156.4 188.1 155 187.7 153.9 187.2 152.4 186.4M156.4 188.1 156 189.7 154.8 190.9 153.3 191.8 152.8 193 151.7 193.6 150.8 192.9 150.8 191.8M162.3 192.7 159.1 193.7 157.9 196.1 159 198.2 159.8 199.1 161.6 198.6 161.6 200.2 162.8 200.2M162.8 200.2 163.7 202 163.3 204.1 163 205.2 163.3 206.3 162.8 207.4 161.9 208.3M162.8 200.2 164.4 199.9 167.4 198.9 167.4 200.8 168.3 201.7 171.1 202.8 172.8 203.2 173.1 206 175.1 206.1 175.2 207.2 175.9 208 175.8 209.7 175.4 210.3M162.8 207.4 163.9 209.1 163.9 210.8 164.6 213.3 165.3 213.3M165.3 213.3 166.3 212.2 167.8 212.6 168.6 213.3 170.3 212.7M170.3 212.7 171.1 210.8 171.3 209.9 174.4 209.4 175.4 210.3M175.4 210.3 175.8 212.6 178 212.8 178.4 214.7 179.7 214.7 179.3 216.4M170.3 212.7 172.2 214.4 174.7 215.6 176 216.3 175 218.2 177.2 218.4 178.1 218.3 179.3 216.4M179.3 216.4 180.2 217.4 180.2 218.1 178 219.4 176 221.6M176 221.6 175.3 223.6 175.1 225.8M176 221.6 177.8 222.2 180 223.3 180.9 224.3 180.7 225.6M165.3 213.3 164.1 215.2 163.9 218 162.6 219.7 162.2 221.9 162.2 224.7 161.7 226.9 161.1 229.1 160.6 231.9 160.2 234.7 160.6 236.9 160.3 239.1 159.4 241.3 158.6 243.6 159.7 244.7 160 245.8 163.3 246 164 246.1M163.8 246.6 163.8 249M173.3 178.7 172.2 180 171.9 181.3 172.6 182.2M172.6 182.2 170.2 183.6 168.7 183.4 168.9 185.2 167.2 186.9 165.7 186.7M172.6 182.2 173.3 183 173.7 185.4 174.7 186.6 177.2 185.9M176.4 181.4 176.1 184.1 177.2 185.9M180 181.7 179.4 185.4M182.6 183.4 181.4 185.3 179.4 185.4 177.2 185.9M237.6 149 238.1 150.8 238.7 152.2 236.1 153 234.4 154.7 230.3 156.1 230.3 157.7M230.3 157.7 230.3 159.1 223.8 159.1M230.3 157.7 234.7 160.2M234.7 160.2 232.8 160.2 233.9 169.7 234.1 170.8 228.9 170.9 227.2 170.8 226.4 171.6M234.7 160.2 241.3 164.6 243.3 166 243.7 166.9 244.7 166.8M244.7 166.8 246.4 166.3 248.3 164.9 253.3 161.9M253.3 161.9 250.6 158.8 250.9 156.9 250.6 154.4M250.6 154.4 250 152.4 248.3 150.8 249.2 149.7 249.2 148 249.6 146.9M250.6 154.4 251.4 152.7 252.8 151.9 252.8 151.1M267.8 152.9 267.8 163.6M267.8 163.6 267.8 165.8 266.7 165.8 266.7 166.3M266.7 166.3 257.8 162 256.7 162.4M256.7 162.4 253.3 161.9M267.8 163.6 281 163.6M256.7 162.4 257.2 164.7 257.3 168 257.2 169.3 255 171.9 255.1 172.8M244.7 166.8 244.7 169.3 243.9 170.8 241.1 171.3 240.2 171.3M244 175 244.4 173 247.8 173.6 250 173.8 252.2 173.2 255.1 172.8M240.2 171.3 241.1 173.2 242.4 174.1 242.7 174.8M242.7 174.8 244 175M240.2 171.3 237.8 172.2 236.1 173.3 235 174.1 234.1 175.2 233.9 176.4M233.9 176.4 232.8 176.3 231.1 176.7M231.1 176.7 230.6 175.2 230 174.2 227.3 174.2M227.3 174.2 226.4 171.6M226.4 171.6 224.4 169.6 221.7 170.2M227.3 174.2 224.8 174 221.4 174.2M224.8 174 224.8 175 223.3 175.8M221.3 173 224.7 173 224.7 173.3 221.3 173.4M225.2 178 227.8 176.9 228.3 178.6 228.6 178.7M228.6 178.7 229.6 179.7 230.6 179.6M228.6 178.7 227.2 180.3M230.6 179.6 231.4 178.6 231.1 176.7M230.6 179.6 230.8 180.8 231.7 183.1M236.7 182.3 236.4 180.8 237 179.1 236.9 177.2 236.9 175.8M233.9 176.4 235 177.2 236.9 177.2M236.9 175.8 240 175.7M241.3 181.2 240.7 179.7 240.6 177.4 240 175.7M241.8 181.1 241.8 178 241 175.8M243 181 243.1 178 244 175M240 175.7 241 175.8 242.7 174.8M249.4 182.8 250.6 180.8 252.8 180.6 253.9 178.6 255 176.9 256.1 175.2 255.8 174.1 255.1 172.8M255.8 174.1 256.7 175.8 257.2 176.9 255.6 176.9 256.9 178.6 257.2 179.7M257.2 179.7 256.1 181.3 256.3 183 257.8 184.9 258 185.6M258 185.6 254.8 185.6 252.6 185.6 250.9 185.4M252.6 185.6 252.6 186.9 250.7 186.9M254.8 185.6 256 186.6 255.6 188.6 256.1 190.2 253.9 190.6 252.8 191.3 252.4 192.3M258 185.6 258.4 184.1 260.7 184.1M260.7 184.1 260 185.8 259.8 188.6 258 190.2 257.8 191.9 256.7 193 254.4 193.1 253.6 194.4M260.7 184.1 261.7 182.4 265 183.3 267.8 182.4 270.4 182.3M257.2 179.7 260.6 179.1 261.1 178 263.9 176.6 265.4 175.8M265.4 175.8 266.1 178 267.2 178.8 270.4 182.3M266.7 166.3 266.7 170.6 265 172.4 264.7 173.9 265.4 175.8M282.9 168 281.1 169.1 280.6 172.1 280.1 173.9 278 176 277.8 178.6 276.7 179.1 278.9 182 279.9 182.9M280.6 172.1 283.3 171.8 285.6 173 287.1 174.1M287.9 174 287.1 174.1 286.4 175.8 287.8 175.2M287.8 175.2 287.8 176.3 288.9 178 292.2 179.1 293.3 179.1 290 182.4 286.7 183.3 285.6 183.7M285.6 183.7 283.9 184.2 282.2 184 280 183.1 279.9 182.9M285.6 183.7 285.6 188.9 286.1 189.9M279.9 182.9 277.8 183.3 275.6 184 274.2 184.1 272.8 183 270.4 182.3M277.8 183.3 278.9 186.3 277.8 188 277.8 189.1M277.8 189.1 281.9 191.4 283.6 193.2M274.2 184.1 274.8 185.6 273 188 272.9 189.6M277.8 189.1 273.9 189.1 272.9 189.6M273.9 189.1 274.2 190.7 273.6 192.9 272.7 192.9M272.2 191 274.2 190.7M272.9 189.6 272.2 191 272.7 192.9 272.9 195.2 274.2 197.1M274.2 197.1 276.6 198.4 277.8 198.6 278.8 200.8M278.8 200.8 282.2 200.6 284.9 199.7M274.2 197.1 271.7 197.4 271.6 198.6 271.8 201.3 273.1 201.6 273.1 202.9 271.1 201.9 268.3 200.8 266.7 200.2M266.7 200.2 264.4 200.2 264.4 198 264.2 196.1 262.2 195.8 261.1 196.9 259.4 196.9 258.3 194.6 254.4 194.6 253.7 194.8M266.7 200.2 266.7 202.4 264.4 202.4 264.4 206 266 207.6M253.1 207.2 255.6 207.3 260.4 207.3 263.3 208 266 207.6 268 207.8M263.3 208.3 263.3 212.4 262.2 212.4 262.2 215.6M262.2 215.6 262.2 219.6 259.4 219.9 258.3 219.8M262.2 215.6 263 217.8 264.4 217.2 265.6 216.1 268.3 216.6 270 214.3 272.7 212.7M272.7 212.7 270.8 210.8 268.9 209.1 268 207.8M268 207.8 270 207.9 272 206.3 273.8 205.3M273.8 205.3 273.6 204.4 276.9 203.6M276.9 203.6 276.4 203 276.7 200.8 276.6 198.4M278.8 200.8 278.4 203 279.9 204.6 279.2 207 278.1 205.6 276.9 203.6M273.8 205.3 276.6 206.6 276.4 209.7 276 211.7 274.8 212.9M272.7 212.7 274.8 212.9M274.8 212.9 275.6 215.2 275.6 217.8 276.6 217.8M274.4 216.9 275.6 216.9 275.6 218.2 274.4 218.2 274.4 216.9M270 220.9 271.7 219.8 272.7 220.8 271.3 222 270 220.9M230.2 141.4 232.8 141.6 232.2 143.6 231.8 145.8 231.8 146.7M238 139.8 240.8 140.6 243.6 140.9M248.3 139.3 247.8 138 247.8 137M247.8 137 246.7 136.6 248.3 135.1M248.3 135.1 249.1 133.6 247.1 133M247.1 133 244.7 132.4 242.8 131.3M243.8 130.9 245.6 130.9 246.7 131.6M246.7 131.6 246.9 130.4 247.8 129.7 248 128.8M246.7 131.6 247.1 133M249.6 127 250.9 127.1M255.9 128.1 256.2 130.2 256.7 131.3M256.7 131.3 253.6 132.1 255.3 133.9M255.3 133.9 254.4 135.2 251.1 135.3 250.7 135.2M250.7 135.2 248.3 135.1M247.8 137 249.4 136.7 250.3 136.4 251.7 136M250.7 135.2 251.7 136M251.7 136 253.6 135.9 255.2 136.3M255.2 136.3 255.2 137.2M255.2 136.3 257.8 136M257.8 136 259 134.7M255.3 133.9 256.7 133.6 258.9 134 259 134.7M256.7 131.3 258.3 132.2 260.9 133M258.9 134 260.9 133M260.9 133 265 133.4M259 134.7 260.9 134.9 262.8 134.1 264.6 134.2M265 133.4 264.6 134.2M265 133.4 266.7 131.6 266.2 130.8M266.2 130.8 266.1 128.1M266.1 128.1 265.3 127.6M265.3 127.6 262 127.6M265.3 127.6 265.3 126.9 263.6 126.6M266.1 128.1 268.7 127.8 269.6 126.1M263.3 125.7 266.7 125.4 269.6 126.1M269.6 126.1 271.3 125.7M271.3 125.7 270.8 124.1M267 123.7 268.9 123.8 270.8 124.1M270.8 124.1 270.4 122.7 271.1 121.9M271.3 125.7 274.2 126.2 275 128.2 276.1 128.9 275.3 130.1M266.2 130.8 270 130.6 273.9 131 275.3 130.1M275.3 130.1 277.8 129.9 279.4 132 282.2 132.6 284.4 132.9 284.2 134.9 282.4 135.7M264.6 134.2 265.4 134.7 267.2 134.8 269.6 134.3M269.6 134.3 271.3 137.4M269.6 134.3 272.4 134.7 273.3 136.4 271.3 137.4 273 137.8M265.4 134.7 263.3 136.7 262.6 136.8M262.6 136.8 261 137M261 137 258.3 136.3 257.8 136M262.6 136.8 263.9 138.2 265 138.3 265.2 138.9M265.2 138.9 267.8 139.4 270 139 271.8 139.4M265.2 138.9 264.9 141M265.4 142.1 267.2 141.9 269.2 141.7M269.2 141.7 271.1 141.3M269.2 141.7 269 142.7M262.2 143.9 263.3 142.7 265.4 142.1M261.6 141.4 262.8 141.1 262.8 142.4 263.3 142.7M255.2 137.4 257 137.4 258.3 136.3M260.6 140.8 259.6 140.2 257.8 139.1 257.6 137.8 261.1 138M261.1 138 261.4 139.7 260.6 140.8M261 137 261.1 138M262.8 141.1 264.9 141 265.4 142.1M252.4 122.6 253.7 120.2 253.6 118 255.6 116.3 256.7 114.4 258.3 112.4 260.6 111.9 262.8 111.3M262.8 111.3 266.1 112.6 266.7 114.9M262.8 111.3 264.4 111.3 268.3 111 268.9 110.2 271.1 110.2 272.2 111.1M272.2 111.1 274.2 110.4M272.2 111.1 271.7 111.9 273.3 113 272.2 113.8 273.3 115 273 116.3 275 118.1 270.9 120.8M231.9 126.9 231.7 127.8 233.1 127.9M286.2 141.8 288.3 142.3 289.8 143.9 289.1 145.4 289.8 146.7 287.1 146.8 283.3 147.2 280.8 147.1 280 148.1M284.4 139.7 287.2 140 289.4 140.6 291.7 141.6 293.9 141.6M291.7 141.6 290 142.1 288.3 142.3M290 142.1 291.7 144.1 291.7 144.8M289.8 143.9 291.7 144.8 293.3 143.9 294.3 145.3M287.1 146.8 285.6 149.8 283.1 150.9 280 151.7 279.6 151.7M279.9 149.6 280.6 149.9 279.8 151 279 151.2M283.1 150.9 283.6 152.3 281.1 153 282.2 154.1 280.6 155.2 278.9 155.3M278.9 155.2 279.4 153 279.6 151.7 279.8 151M278 153.2 278.8 155.2M283.6 152.3 289.7 155.6 291.7 155.7 293.8 156.3M291.7 155.7 293 154.6 293.3 154.7M289.8 146.7 291.1 148.2 290.6 149.7 291.1 151.3 293.1 152.7 293.9 154.7M287.6 169.8 288.9 168.7 292.2 169.1 294.4 167.3 297.8 166.9 299 169.6M297.8 166.9 301.1 165.8 301.9 163.6 298.4 162.6 297.3 161.1M301.9 163.6 302.2 161.3 302.7 160.3M296.4 160.6 297.2 160.8M299.9 146.6 302.2 145.8 304.4 146.1 306.7 147.3 308 147.3 308 148.4 307.3 150.2 307.8 153 307.7 154.9 310 157.8 308.4 160M307.7 154.9 311.1 155.2 313.7 154.7 314.1 153.3 317 152.6 317.8 150.8 319.4 149.1 319.4 147.7 322.8 146.7M308 148.4 311.7 147.4 313.9 146.4 315.3 146.7 317.8 146.2 319.4 145.6 319.6 147.1 322.8 146.7M313.9 146.4 311.1 144.7 308.9 142.4 306.7 141.1 305 140.6 303.3 142.1 302.2 142.1 302.2 138 305 137.4M302.2 142.1 300.6 141.3 298.3 141.6M307.8 138.8 308.9 139.7 311.7 139.6 313.3 141.3 315.6 142.4 318.3 141.1 318.9 141 321.7 140.8 322.2 140 325.6 140.3 329.1 141.1M329.1 141.1 326.7 142.4 324.4 143.1 322 144 323.3 146.3 322.8 146.7M315.3 146.7 315.9 145.2 315.2 144.1 318.3 143.3 320 144.2 322 144M318.3 143.3 321.1 142.8 318.9 141M295 136.7 292.2 134.7 291.7 134.1 292.2 132.4 294.1 131.8 296.7 130.7 300.6 131.3 302.2 131.3 305 131.3 308.3 131.1 307.8 128.2 312.2 127.6 316.7 126.6 318.9 127.8 321.7 128 325.3 127.7 326.6 128.8 328.9 131.3 332.2 131.3 335 132.9 337 133.3M337 133.3 335.3 135.6 332.2 135.6 331.4 137.4 328.9 138 329.8 140 329.1 141.1M337 133.3 340 132.1 345.6 132.4 348.9 130.2 353.3 130.9 353.6 132 357.8 132.1 362.2 133.3 366.7 132.2 369.7 132.7M337 133.3 338.3 134.3 340.6 135.8 341.1 137.8 346.1 138.9 347.2 140.6 352.2 140.7 356.7 141.8 362.2 140.6 364.4 139.3 364.2 138 368.3 137.4 370.6 136.2 373.1 136.1 370.9 135 368.4 134.8 369.7 132.7M369.7 132.7 372.4 132.1 374.2 129.6 375 128.8 377.3 128.6 380 129.3 381.7 132.2 385.2 133.7 385.6 135 389.7 134.3 388 137.9 385.8 138.2 385.6 140.2 385.1 140.9M385.1 140.9 382.2 141.3 380.9 141.7 378.1 143.7M380.6 146 382.6 145.1M360 164.1 358.3 162.7 357 162.1 353.6 163.1 352.4 164.4 350.2 163.6 349.8 161.3 348.4 160.8 349.7 159.1 349.4 157.3 348.2 156.6 346.7 155.3 344.4 155.8 342.2 157.1 341.9 157.1M341.9 157.1 338.9 156.9 338.8 157.7 338.9 158.3 342.2 158.2 341.9 157.1M337.9 157 335.6 156.9 333.3 155.9 330.2 154.4M330.2 154.4 329 156 332.2 157.6 335.3 158.4 337.9 158.6 337.9 157 338.8 157.7M330.2 154.4 327.8 153.3 327.4 151.9 328.3 151.3 327.4 149.7 326.4 148.6 324.2 147.2 322.8 146.7M326.4 148.6 322.2 149.4 322.2 151.3 323.7 152.1 322.8 153.6 321.1 155.2 318.9 157 317.2 158 318.7 159.4 318.9 160.9 316.4 161 315.8 161.7M337.9 158.7 338.3 159.9 337.8 160.6 338.9 163.6M342.6 165 342.9 164.3 342.6 161.7 341.3 161.7 342.8 160.2 339.8 159.9 339.7 158.9 338.9 158.3M342.9 164.3 343.7 161.3 345.2 159.7 348.2 156.6M349.4 176.9 350.2 174.9 350 172.7 349.1 171.3 349.6 169.9 348.3 167.4 351.1 165.4 352.4 164.4M351.1 165.4 351.7 166.3 352.4 166.3 352.2 168.3 353.4 167.8 355.6 167.7 356.4 169.7 357.2 172M357.2 172 354.4 172.2 353.8 173 354.3 175M357.2 172 359.4 171.9M353.6 163.1 354.4 164.7 356.1 165.3 355.6 166.3 356.9 167.4 358.6 169.4 359.4 171.9 359.4 174.3 357.7 175 356.7 175.9 356.1 176.4M351.3 180.8 352.2 181.6 353.4 181.1M361.8 185.8 362.2 186.9 364.4 186.4 366.7 186.3 367.8 184.9 368.3 183.2 370.7 183.3M366.7 183 367.6 183.6 368.1 182.4M396.7 190.9 396.7 198.1M378.9 198 379.1 198.7"/>
</g>
<g fill="#646464" stroke="#000000" stroke-width="1.1" stroke-linejoin="round">
<path d="M271.1 141.9 272.2 142.2 275 142.2 277.2 141.3 278.9 141.3 280.6 142.1 282.8 142.4 284.4 142.4 286.2 141.8 286.1 140.6 284.4 139.7 282.8 138.7 281.7 138 280.7 137.7 279.4 138 277.8 138.7 277.2 138 276.1 137.4 277.2 136.9 275 136.2 273.9 136.9 273 137.8 271.9 139.1 271.1 140.2 270.9 141.1Z"/>
<path d="M278.9 136.9 280.6 137.6 282.2 136.7 283.6 135.7 282.2 135.6 280.6 136.1Z"/>
<path d="M292.2 138.6 291.9 137.4 293.9 136.6 296.7 135.8 298.9 136 298.9 137.7 297.2 137.8 296.1 138.6 297.2 139.7 298.3 140.8 298.7 142.1 299.8 142.7 298.9 143.6 299.4 144.7 300 146.3 299.8 146.9 297.8 147.2 296.1 146.7 294.8 146.2 294.4 145.2 294.7 144.1 295.6 143.1 294.8 142.4 293.9 141.3 292.8 140.2 292.8 139.1Z"/>
</g>
<path d="M56.7 127.7 54.4 128.4 52.2 129.2M50.6 129.4 48.3 129.9 46.1 130.1M44.4 130.4 42.2 130.7 40 130.9M431.7 129.2 433.3 129.6M436.7 130.3 438.9 130.8M68.3 124.7 70.8 123.7 69.4 124.3M413.3 131.9 412.6 133M411.1 133.8 409.4 135.4M408.3 136.3 406.4 137.3M405.3 137.7 403.3 138.6 402.2 139.1M385 154.2 384.1 156.4M382.6 158.2 381.9 159M379.2 160.4 377.8 160.9M92.2 128 93.7 129.1 94.2 130M88.6 123.6 90.6 124.7 91.9 126 92.8 127M152.8 158.4 154.2 158.7 154.2 160M153.1 160.6 153.6 161.3M155.3 161 156.3 161.9 156.9 162.7M158.2 164.6 158.9 164.3M168 167.7 170 167.9 171.3 169M171.6 170 171.9 170.9 172.2 171.8M172.2 172.7 172 173.3 171.4 174.6M171.3 176.1 172.2 176.1 172.2 176.8 171.3 176.8M66.7 165.4 67.8 166.3 66.9 166.9M64.2 164.1 66.1 164.9M411.9 194.1 413.2 195.6M414 195.6 415.1 196.3 417.6 197.3M417.2 198.3 418.7 198.9M418.6 197.3 419.2 198.7M419.2 199.4 420.3 200M425.1 204.3 425.8 205.3M425.9 205.8 426.9 206.4M427 207.6 428.1 209M422.2 210.3 423.9 211.6 425.6 212.8M437 207.4 438.3 207.6 438.1 208.2 437.1 208.1 437 207.4M438.6 206.6 440 206M299.2 174 300.6 174.1M266.2 148.7 269.1 148.9M275.9 149.1 277.2 148.9 278.3 148.4 277.6 149.2 275.9 149.1M253.9 145.8 257.2 145.6 256.8 147.1 253.9 146.2 253.9 145.8M249.1 142.6 250.7 142.3 250.7 144.4 249.4 144.7 249.1 142.6M249.6 140.9 250.4 140.2 250.6 141.9 249.8 141.8 249.6 140.9M242.7 144.1 243.7 143.8M252.4 126.1 253.9 125.9 253.6 126.9M260.2 124.7 261 123.8M264.4 123.2 265.6 123M172.2 245.2 173.9 245.1 175.6 245.6 174.1 246 172.2 245.2M197.8 248 200 248.7M316.4 242.4 318.1 242.9 317.2 243.2M343.1 173.1 342.9 175.1M343.3 177.8 344.2 180.2M348.1 186.6 349.4 188.6M349.9 189.3 351.4 191.3M357.2 189.9 358.3 191.1M359.6 191.1 360.2 191.3M365.3 195.8 366.7 195.8M379.8 196.7 380.9 196.6M385.8 196.3 386.3 196.9M389.1 194.4 389.6 195.6M387.6 194.1 387.8 194.7M378.3 190 380 190.1M381.4 189.7 382.2 189.8M382.6 185.3 382.9 185.7M390.7 189.1 391.4 189.2M390.6 189.9 392 190M377.1 176.9 377.8 175.6M378.2 175.3 378.9 176.7M375.6 174.9 376.7 175.2 376.1 176.2 375.6 174.9M377.6 177.1 378.3 176.9M402.9 190.3 403.8 190.2M411.9 194.1 413.2 195.6M391.8 227.8 393.3 227.9M384.8 200.7 386 200.7M391.7 203.6 392.1 203.8M426.2 240.2 426.9 240.4M221.3 156.6 222.8 156.9M224.2 156.4 225 155.8M213.3 170.2 213.9 171.3M208.3 145.1 209.8 145M211.4 146 212 146M288.1 201 289.3 201.6M301.4 211.4 301.9 211.6M303.8 210.4 304.1 210.7M283.7 194.7 283.9 195.1M232 118.9 232.7 119.2M238.4 120.8 238.7 121.3M232 123.3 232.3 124.1M230.4 109.1 231.1 109M261.1 105.3 261.3 105.2M293.9 111.1 295.1 110.9 294.8 111.6 293.9 111.1M305.6 109.9 306.9 110.4M317.8 106.6 319.4 106.7M392.8 126.9 393.7 127.1M421.7 122.4 422.6 122.9M49.2 117.4 52.2 117.8M54.4 121.2 55.8 121.3M50.8 124.4 51.6 125.1M168.6 132.7 171.1 133.3M168.7 136.1 170.9 136.6M171.9 137.2 173.1 136M158 142.8 160 142.4M151.1 119.1 151.7 119.3M147.8 118.2 149.4 118.6M151.3 125.2 152.2 125.8M149.1 129.1 150.6 129.2M129.4 111.1 133.3 111.7 131.7 110.6 129.4 111.1M150.6 106.9 154.4 106.6 154.4 107.2M133.3 104.3 136.1 104.7 135.6 105.1M124.4 100.8 128.9 101.3 130 100.2 125.6 100 124.4 100.8M131.7 101.3 134.4 101.6 133.9 100.4 131.7 101.3M128.9 99.1 130.6 99.4M114.4 101 117.8 101.1 117.8 100.4 114.4 101M114.4 102.1 117.8 101.9 116.7 101.3M107.8 103.9 109.4 103.8M123.3 104.7 125 104.2M121.7 106.3 123.3 106.8M179.4 110.8 182.2 110 180.6 109.9 179.4 110.8M138.3 188.3 138.9 189.1 139.7 188.7M157.8 234.7 158.2 236.1M156.7 241.9 157.2 243.6M162.2 249.3 164.4 249.6M183.9 188.2 186 188.4 185 189.8 183.9 188.2M377.6 161 378.1 160.8M383.6 149.6 383.8 150M380.2 150.9 381 150.9M393.7 145.6 393.9 145.9M43.7 236.7 44.2 236.9M160 247.6 161.7 248.2 162.8 249M157.2 244.1 157.8 245.8 158.9 247.1M160.6 248.7 163.3 249.8 165 249.8M157.4 236.9 157.2 238.6 156.7 240M171.7 257.7 175 256.9M168.3 259.7 170.6 259.1M163.3 263 164.4 262.2M159.4 264.7 161.7 266.3 161.1 268M175.2 259.3 176.4 259.1M160 109.6 162.2 110.7M152.2 107.8 156.7 108.9M163.9 111.8 166.7 112.9M162.2 114 165.6 115.1M155.6 111.6 159.4 112.9M144.4 107.4 148.9 108.6 151.1 109.7M160 116.9 163.3 117.8M114.4 108.4 119.4 109.1M110 108.9 113.9 109.8M120 110.2 124.4 110.7M113.3 104.1 117.8 104.4M137.8 104 144.4 104.3M134.4 110.8 136.7 111.3M145.6 111.9 147.2 113.2M138.9 114.1 142.2 114.9M161.7 121.3 162.4 122.7M172.8 126.3 175 127.4M176.1 133 178.3 134.1M48.9 281.6 57.8 280.7 64.4 280.2M55.6 279.1 62.2 278.3 65.6 278.2M61.1 276.4 66.7 275.8 70 276.1M145.6 99.7 153.3 99.9 155.6 100.2M142.2 98.6 151.1 98.8 156.7 98.2M144.4 97.4 153.3 97.7 162.2 97.1M148.9 101.9 153.3 101.6" fill="none" stroke="#000000" stroke-width="1.2" stroke-linecap="round" stroke-linejoin="round"/>
<g fill="#000000">
<circle cx="42.9" cy="156.7" r="0.45"/>
<circle cx="44.7" cy="157.1" r="0.4"/>
<circle cx="46.8" cy="159.1" r="0.4"/>
<circle cx="49.2" cy="159.3" r="0.4"/>
<circle cx="53.3" cy="160.2" r="0.4"/>
<circle cx="55.3" cy="161.6" r="0.45"/>
<circle cx="57" cy="161.8" r="0.4"/>
<circle cx="60.1" cy="162.4" r="0.45"/>
<circle cx="62" cy="163.7" r="0.6"/>
<circle cx="62.8" cy="163.6" r="0.6"/>
<circle cx="64.7" cy="164.2" r="0.6"/>
<circle cx="65.6" cy="164.6" r="0.5"/>
<circle cx="51.7" cy="169.4" r="0.4"/>
<circle cx="60" cy="181.4" r="0.4"/>
<circle cx="61.8" cy="182.8" r="0.4"/>
<circle cx="63" cy="183.7" r="0.45"/>
<circle cx="65.1" cy="185.9" r="0.55"/>
<circle cx="62.2" cy="188.4" r="0.4"/>
<circle cx="66.8" cy="192.4" r="0.4"/>
<circle cx="67.9" cy="194.2" r="0.4"/>
<circle cx="71.3" cy="200.7" r="0.4"/>
<circle cx="73.1" cy="199" r="0.4"/>
<circle cx="49.1" cy="198.2" r="0.4"/>
<circle cx="49.8" cy="197.6" r="0.4"/>
<circle cx="48.3" cy="197.4" r="0.4"/>
<circle cx="46.7" cy="193" r="0.4"/>
<circle cx="49.2" cy="191.1" r="0.4"/>
<circle cx="49.9" cy="193" r="0.4"/>
<circle cx="46.1" cy="191.3" r="0.4"/>
<circle cx="48.3" cy="203.1" r="0.6"/>
<circle cx="49.2" cy="203.4" r="0.55"/>
<circle cx="50.3" cy="203.9" r="0.45"/>
<circle cx="51.7" cy="203.8" r="0.4"/>
<circle cx="42.1" cy="203.9" r="0.4"/>
<circle cx="44.2" cy="202.8" r="0.4"/>
<circle cx="45.3" cy="211.6" r="0.55"/>
<circle cx="46.7" cy="208.8" r="0.45"/>
<circle cx="46.2" cy="210" r="0.45"/>
<circle cx="46.8" cy="205.7" r="0.4"/>
<circle cx="44.9" cy="205.3" r="0.4"/>
<circle cx="51.2" cy="209.1" r="0.5"/>
<circle cx="41.3" cy="208" r="0.4"/>
<circle cx="40.8" cy="206.3" r="0.45"/>
<circle cx="40.1" cy="206.9" r="0.45"/>
<circle cx="41.3" cy="211" r="0.4"/>
<circle cx="41.1" cy="209.2" r="0.45"/>
<circle cx="62.4" cy="211.6" r="0.5"/>
<circle cx="64.6" cy="212.3" r="0.45"/>
<circle cx="62.4" cy="209" r="0.4"/>
<circle cx="65.2" cy="210.3" r="0.4"/>
<circle cx="64.3" cy="210.1" r="0.4"/>
<circle cx="61.1" cy="199.6" r="0.4"/>
<circle cx="55.8" cy="200.1" r="0.4"/>
<circle cx="58.8" cy="208.1" r="0.4"/>
<circle cx="71.4" cy="206.3" r="0.5"/>
<circle cx="71.8" cy="206.7" r="0.5"/>
<circle cx="73.9" cy="207.6" r="0.65"/>
<circle cx="73.6" cy="207.4" r="0.5"/>
<circle cx="72.2" cy="206.6" r="0.45"/>
<circle cx="70.8" cy="206.2" r="0.4"/>
<circle cx="75.4" cy="207.9" r="0.4"/>
<circle cx="76" cy="204.7" r="0.45"/>
<circle cx="77.4" cy="205.2" r="0.4"/>
<circle cx="78.3" cy="206.1" r="0.45"/>
<circle cx="79.1" cy="206.3" r="0.4"/>
<circle cx="80.6" cy="206.4" r="0.4"/>
<circle cx="81.7" cy="205.9" r="0.4"/>
<circle cx="83.3" cy="207.2" r="0.45"/>
<circle cx="83.8" cy="208.2" r="0.4"/>
<circle cx="84.1" cy="205.7" r="0.4"/>
<circle cx="85.8" cy="208.7" r="0.4"/>
<circle cx="86.2" cy="206.7" r="0.4"/>
<circle cx="88.4" cy="208.6" r="0.4"/>
<circle cx="78.9" cy="207.3" r="0.4"/>
<circle cx="81" cy="207.2" r="0.4"/>
<circle cx="82.8" cy="209.3" r="0.4"/>
<circle cx="85.6" cy="211.1" r="0.4"/>
<circle cx="88.7" cy="212.2" r="0.4"/>
<circle cx="90" cy="213.7" r="0.5"/>
<circle cx="90.6" cy="214" r="0.4"/>
<circle cx="71.8" cy="213" r="0.45"/>
<circle cx="73.9" cy="214" r="0.45"/>
<circle cx="75.9" cy="214.6" r="0.4"/>
<circle cx="79.7" cy="218.7" r="0.45"/>
<circle cx="70.2" cy="213.1" r="0.4"/>
<circle cx="84.3" cy="197.9" r="0.5"/>
<circle cx="85.6" cy="198.9" r="0.5"/>
<circle cx="85" cy="197.9" r="0.45"/>
<circle cx="85.8" cy="199.7" r="0.4"/>
<circle cx="83.8" cy="196.9" r="0.4"/>
<circle cx="95.4" cy="215.9" r="0.45"/>
<circle cx="97.4" cy="215.1" r="0.4"/>
<circle cx="101.3" cy="215.4" r="0.4"/>
<circle cx="94.8" cy="214.6" r="0.4"/>
<circle cx="118.4" cy="218.1" r="0.5"/>
<circle cx="122.9" cy="217.4" r="0.4"/>
<circle cx="150.2" cy="225.4" r="0.4"/>
<circle cx="152.3" cy="225.3" r="0.45"/>
<circle cx="151" cy="217.2" r="0.4"/>
<circle cx="138.1" cy="187.8" r="0.4"/>
<circle cx="140.6" cy="188.9" r="0.5"/>
<circle cx="139.6" cy="189.4" r="0.4"/>
<circle cx="143.3" cy="181.9" r="0.4"/>
<circle cx="149.3" cy="183.6" r="0.35"/>
<circle cx="42.2" cy="220.6" r="0.45"/>
<circle cx="42.3" cy="221.6" r="0.4"/>
<circle cx="43.9" cy="236.8" r="0.6"/>
<circle cx="116.8" cy="167.1" r="0.4"/>
<circle cx="112.6" cy="167.6" r="0.4"/>
<circle cx="108.6" cy="155.8" r="0.45"/>
<circle cx="112" cy="156.8" r="0.45"/>
<circle cx="121.7" cy="164.1" r="0.4"/>
<circle cx="168.1" cy="152.1" r="0.45"/>
<circle cx="173.9" cy="173.3" r="0.5"/>
<circle cx="163.4" cy="174.4" r="0.5"/>
<circle cx="164.1" cy="174.4" r="0.45"/>
<circle cx="162.2" cy="174.1" r="0.45"/>
<circle cx="168.9" cy="175.9" r="0.5"/>
<circle cx="149.7" cy="166.6" r="0.4"/>
<circle cx="151.2" cy="166.1" r="0.35"/>
<circle cx="148" cy="164" r="0.55"/>
<circle cx="160.3" cy="163.9" r="0.45"/>
<circle cx="159.8" cy="163.8" r="0.4"/>
<circle cx="158.9" cy="163.1" r="0.4"/>
<circle cx="157.3" cy="161.3" r="0.4"/>
<circle cx="155.9" cy="160.6" r="0.4"/>
<circle cx="168.2" cy="167.6" r="0.4"/>
<circle cx="212" cy="169.2" r="0.45"/>
<circle cx="214.6" cy="170" r="0.45"/>
<circle cx="212.9" cy="171.4" r="0.45"/>
<circle cx="214.3" cy="171.1" r="0.4"/>
<circle cx="220.1" cy="156.1" r="0.5"/>
<circle cx="220.9" cy="156.8" r="0.45"/>
<circle cx="220" cy="157.2" r="0.4"/>
<circle cx="221.1" cy="151.7" r="0.5"/>
<circle cx="221.9" cy="151.2" r="0.35"/>
<circle cx="205.4" cy="144.1" r="0.4"/>
<circle cx="208.7" cy="145.2" r="0.45"/>
<circle cx="208.9" cy="144.7" r="0.4"/>
<circle cx="212.1" cy="147" r="0.4"/>
<circle cx="233.7" cy="205.7" r="0.4"/>
<circle cx="224" cy="196.8" r="0.4"/>
<circle cx="226.3" cy="229.2" r="0.4"/>
<circle cx="229" cy="232.8" r="0.4"/>
<circle cx="247.3" cy="187.7" r="0.5"/>
<circle cx="248.2" cy="186.2" r="0.45"/>
<circle cx="249.7" cy="184.1" r="0.55"/>
<circle cx="246.2" cy="189.6" r="0.35"/>
<circle cx="243.8" cy="248.4" r="0.4"/>
<circle cx="282" cy="240.1" r="0.4"/>
<circle cx="297.6" cy="239.6" r="0.45"/>
<circle cx="295.8" cy="239.2" r="0.4"/>
<circle cx="321.7" cy="247" r="0.5"/>
<circle cx="326.1" cy="230" r="0.4"/>
<circle cx="326.1" cy="231" r="0.4"/>
<circle cx="301.7" cy="193.2" r="0.45"/>
<circle cx="302" cy="192.8" r="0.4"/>
<circle cx="291.4" cy="198.4" r="0.4"/>
<circle cx="299.2" cy="194.1" r="0.35"/>
<circle cx="310.4" cy="209.9" r="0.4"/>
<circle cx="320.4" cy="196.1" r="0.4"/>
<circle cx="321.2" cy="188.7" r="0.35"/>
<circle cx="321.7" cy="183.3" r="0.4"/>
<circle cx="321.1" cy="185.8" r="0.35"/>
<circle cx="321.6" cy="181.9" r="0.35"/>
<circle cx="320.9" cy="175.6" r="0.35"/>
<circle cx="347.6" cy="201.6" r="0.4"/>
<circle cx="357.4" cy="199.7" r="0.4"/>
<circle cx="288.6" cy="201.7" r="0.4"/>
<circle cx="290.1" cy="202.2" r="0.5"/>
<circle cx="284.1" cy="193.8" r="0.45"/>
<circle cx="284.1" cy="196.8" r="0.4"/>
<circle cx="285" cy="201.8" r="0.35"/>
<circle cx="397.8" cy="157.9" r="0.4"/>
<circle cx="397" cy="160.4" r="0.4"/>
<circle cx="396.6" cy="154.1" r="0.35"/>
<circle cx="395.3" cy="151.2" r="0.45"/>
<circle cx="394.9" cy="149.4" r="0.45"/>
<circle cx="385.6" cy="159.2" r="0.4"/>
<circle cx="402" cy="167.9" r="0.4"/>
<circle cx="401.9" cy="169.9" r="0.4"/>
<circle cx="401.9" cy="171.1" r="0.5"/>
<circle cx="401.3" cy="172.2" r="0.4"/>
<circle cx="400.9" cy="173" r="0.6"/>
<circle cx="401.8" cy="166.1" r="0.35"/>
<circle cx="401.6" cy="165.2" r="0.35"/>
<circle cx="389.4" cy="179.7" r="0.55"/>
<circle cx="393.4" cy="177.4" r="0.5"/>
<circle cx="396.1" cy="177.1" r="0.35"/>
<circle cx="400" cy="179.8" r="0.35"/>
<circle cx="403.3" cy="179.8" r="0.35"/>
<circle cx="406.3" cy="178.4" r="0.35"/>
<circle cx="408.7" cy="179.8" r="0.55"/>
<circle cx="410.8" cy="181.9" r="0.35"/>
<circle cx="415.8" cy="180.3" r="0.6"/>
<circle cx="421.1" cy="182.1" r="0.5"/>
<circle cx="414.9" cy="180.1" r="0.35"/>
<circle cx="412" cy="183.8" r="0.35"/>
<circle cx="385.8" cy="184.7" r="0.35"/>
<circle cx="425.4" cy="188.6" r="0.4"/>
<circle cx="428.3" cy="189" r="0.35"/>
<circle cx="426.3" cy="178.3" r="0.45"/>
<circle cx="430.2" cy="180.1" r="0.45"/>
<circle cx="428.8" cy="175.6" r="0.4"/>
<circle cx="423.9" cy="175.3" r="0.4"/>
<circle cx="420.3" cy="175.3" r="0.4"/>
<circle cx="427.6" cy="179.9" r="0.4"/>
<circle cx="430.9" cy="181.3" r="0.4"/>
<circle cx="428.4" cy="181.4" r="0.35"/>
<circle cx="424.9" cy="177.8" r="0.35"/>
<circle cx="429" cy="177.4" r="0.4"/>
<circle cx="430.1" cy="178.1" r="0.35"/>
<circle cx="426.8" cy="182.9" r="0.35"/>
<circle cx="425.1" cy="166.6" r="0.4"/>
<circle cx="432.2" cy="186.4" r="0.45"/>
<circle cx="432.1" cy="184.6" r="0.4"/>
<circle cx="432.6" cy="185.8" r="0.35"/>
<circle cx="433.2" cy="187.6" r="0.4"/>
<circle cx="433.8" cy="188.8" r="0.4"/>
<circle cx="435" cy="189.4" r="0.4"/>
<circle cx="436" cy="190.9" r="0.35"/>
<circle cx="434.2" cy="190" r="0.35"/>
<circle cx="439.1" cy="197.4" r="0.4"/>
<circle cx="438.6" cy="196.3" r="0.35"/>
<circle cx="437" cy="195" r="0.35"/>
<circle cx="435.7" cy="194.3" r="0.35"/>
<circle cx="439.8" cy="198.4" r="0.35"/>
<circle cx="436.8" cy="201.9" r="0.45"/>
<circle cx="424.4" cy="199.9" r="0.5"/>
<circle cx="425.1" cy="200.9" r="0.4"/>
<circle cx="425.8" cy="199" r="0.35"/>
<circle cx="428.7" cy="200.9" r="0.35"/>
<circle cx="427.6" cy="201.7" r="0.35"/>
<circle cx="418" cy="200.9" r="0.45"/>
<circle cx="417.7" cy="194" r="0.35"/>
<circle cx="414.4" cy="193.2" r="0.35"/>
<circle cx="412.6" cy="192.9" r="0.35"/>
<circle cx="411.3" cy="192.9" r="0.35"/>
<circle cx="409.7" cy="191.8" r="0.35"/>
<circle cx="408.9" cy="191" r="0.35"/>
<circle cx="406.2" cy="189.7" r="0.5"/>
<circle cx="407.1" cy="190.8" r="0.4"/>
<circle cx="403.6" cy="194" r="0.45"/>
<circle cx="404.4" cy="194.3" r="0.4"/>
<circle cx="407.8" cy="198.3" r="0.5"/>
<circle cx="407.4" cy="198.7" r="0.5"/>
<circle cx="408" cy="197.6" r="0.45"/>
<circle cx="409.8" cy="198.1" r="0.45"/>
<circle cx="410.7" cy="200.8" r="0.5"/>
<circle cx="411.2" cy="200.7" r="0.35"/>
<circle cx="409.7" cy="199.9" r="0.4"/>
<circle cx="399.9" cy="191.9" r="0.3"/>
<circle cx="426" cy="203.4" r="0.45"/>
<circle cx="426.2" cy="204" r="0.45"/>
<circle cx="426.8" cy="205.1" r="0.5"/>
<circle cx="426.9" cy="205.9" r="0.5"/>
<circle cx="427.1" cy="207.7" r="0.55"/>
<circle cx="428" cy="208.9" r="0.45"/>
<circle cx="428.2" cy="209.7" r="0.5"/>
<circle cx="428.7" cy="210.4" r="0.4"/>
<circle cx="425.8" cy="211.1" r="0.45"/>
<circle cx="426.7" cy="211.9" r="0.5"/>
<circle cx="426.1" cy="213.1" r="0.4"/>
<circle cx="424.9" cy="212.4" r="0.3"/>
<circle cx="416.8" cy="223" r="0.4"/>
<circle cx="426.6" cy="220.2" r="0.45"/>
<circle cx="437.8" cy="209.1" r="0.5"/>
<circle cx="439.9" cy="206.7" r="0.5"/>
<circle cx="436.8" cy="207.2" r="0.35"/>
<circle cx="438.7" cy="207.7" r="0.4"/>
<circle cx="439.3" cy="207.9" r="0.4"/>
<circle cx="439.8" cy="208.7" r="0.35"/>
<circle cx="438.8" cy="208" r="0.35"/>
<circle cx="425.1" cy="241.3" r="0.35"/>
<circle cx="427.9" cy="246.3" r="0.5"/>
<circle cx="424.7" cy="244.3" r="0.55"/>
<circle cx="416.6" cy="248.7" r="0.45"/>
<circle cx="438.7" cy="243.2" r="0.4"/>
<circle cx="438.9" cy="241" r="0.35"/>
<circle cx="210.6" cy="252.2" r="0.4"/>
<circle cx="209.7" cy="254" r="0.35"/>
<circle cx="189.3" cy="255.3" r="0.55"/>
<circle cx="178.7" cy="255.9" r="0.55"/>
<circle cx="175.6" cy="256.9" r="0.55"/>
<circle cx="173.9" cy="257.3" r="0.5"/>
<circle cx="172.7" cy="257.9" r="0.45"/>
<circle cx="170.2" cy="259.7" r="0.5"/>
<circle cx="169.4" cy="260" r="0.5"/>
<circle cx="198.9" cy="248.2" r="0.4"/>
<circle cx="139.3" cy="264.4" r="0.45"/>
<circle cx="421.1" cy="262.2" r="0.4"/>
<circle cx="242.8" cy="248" r="0.35"/>
</g>
</svg>
  </div>

  <div class="abs" id="edgeL2"></div>
  <div class="abs" id="edgeR2"></div>
  <div class="abs" id="edgeB2"></div>
  <div class="abs" id="edgeL"></div>
  <div class="abs" id="edgeR"></div>
  <div class="abs" id="edgeB"></div>
</div>
</body>
</html>
